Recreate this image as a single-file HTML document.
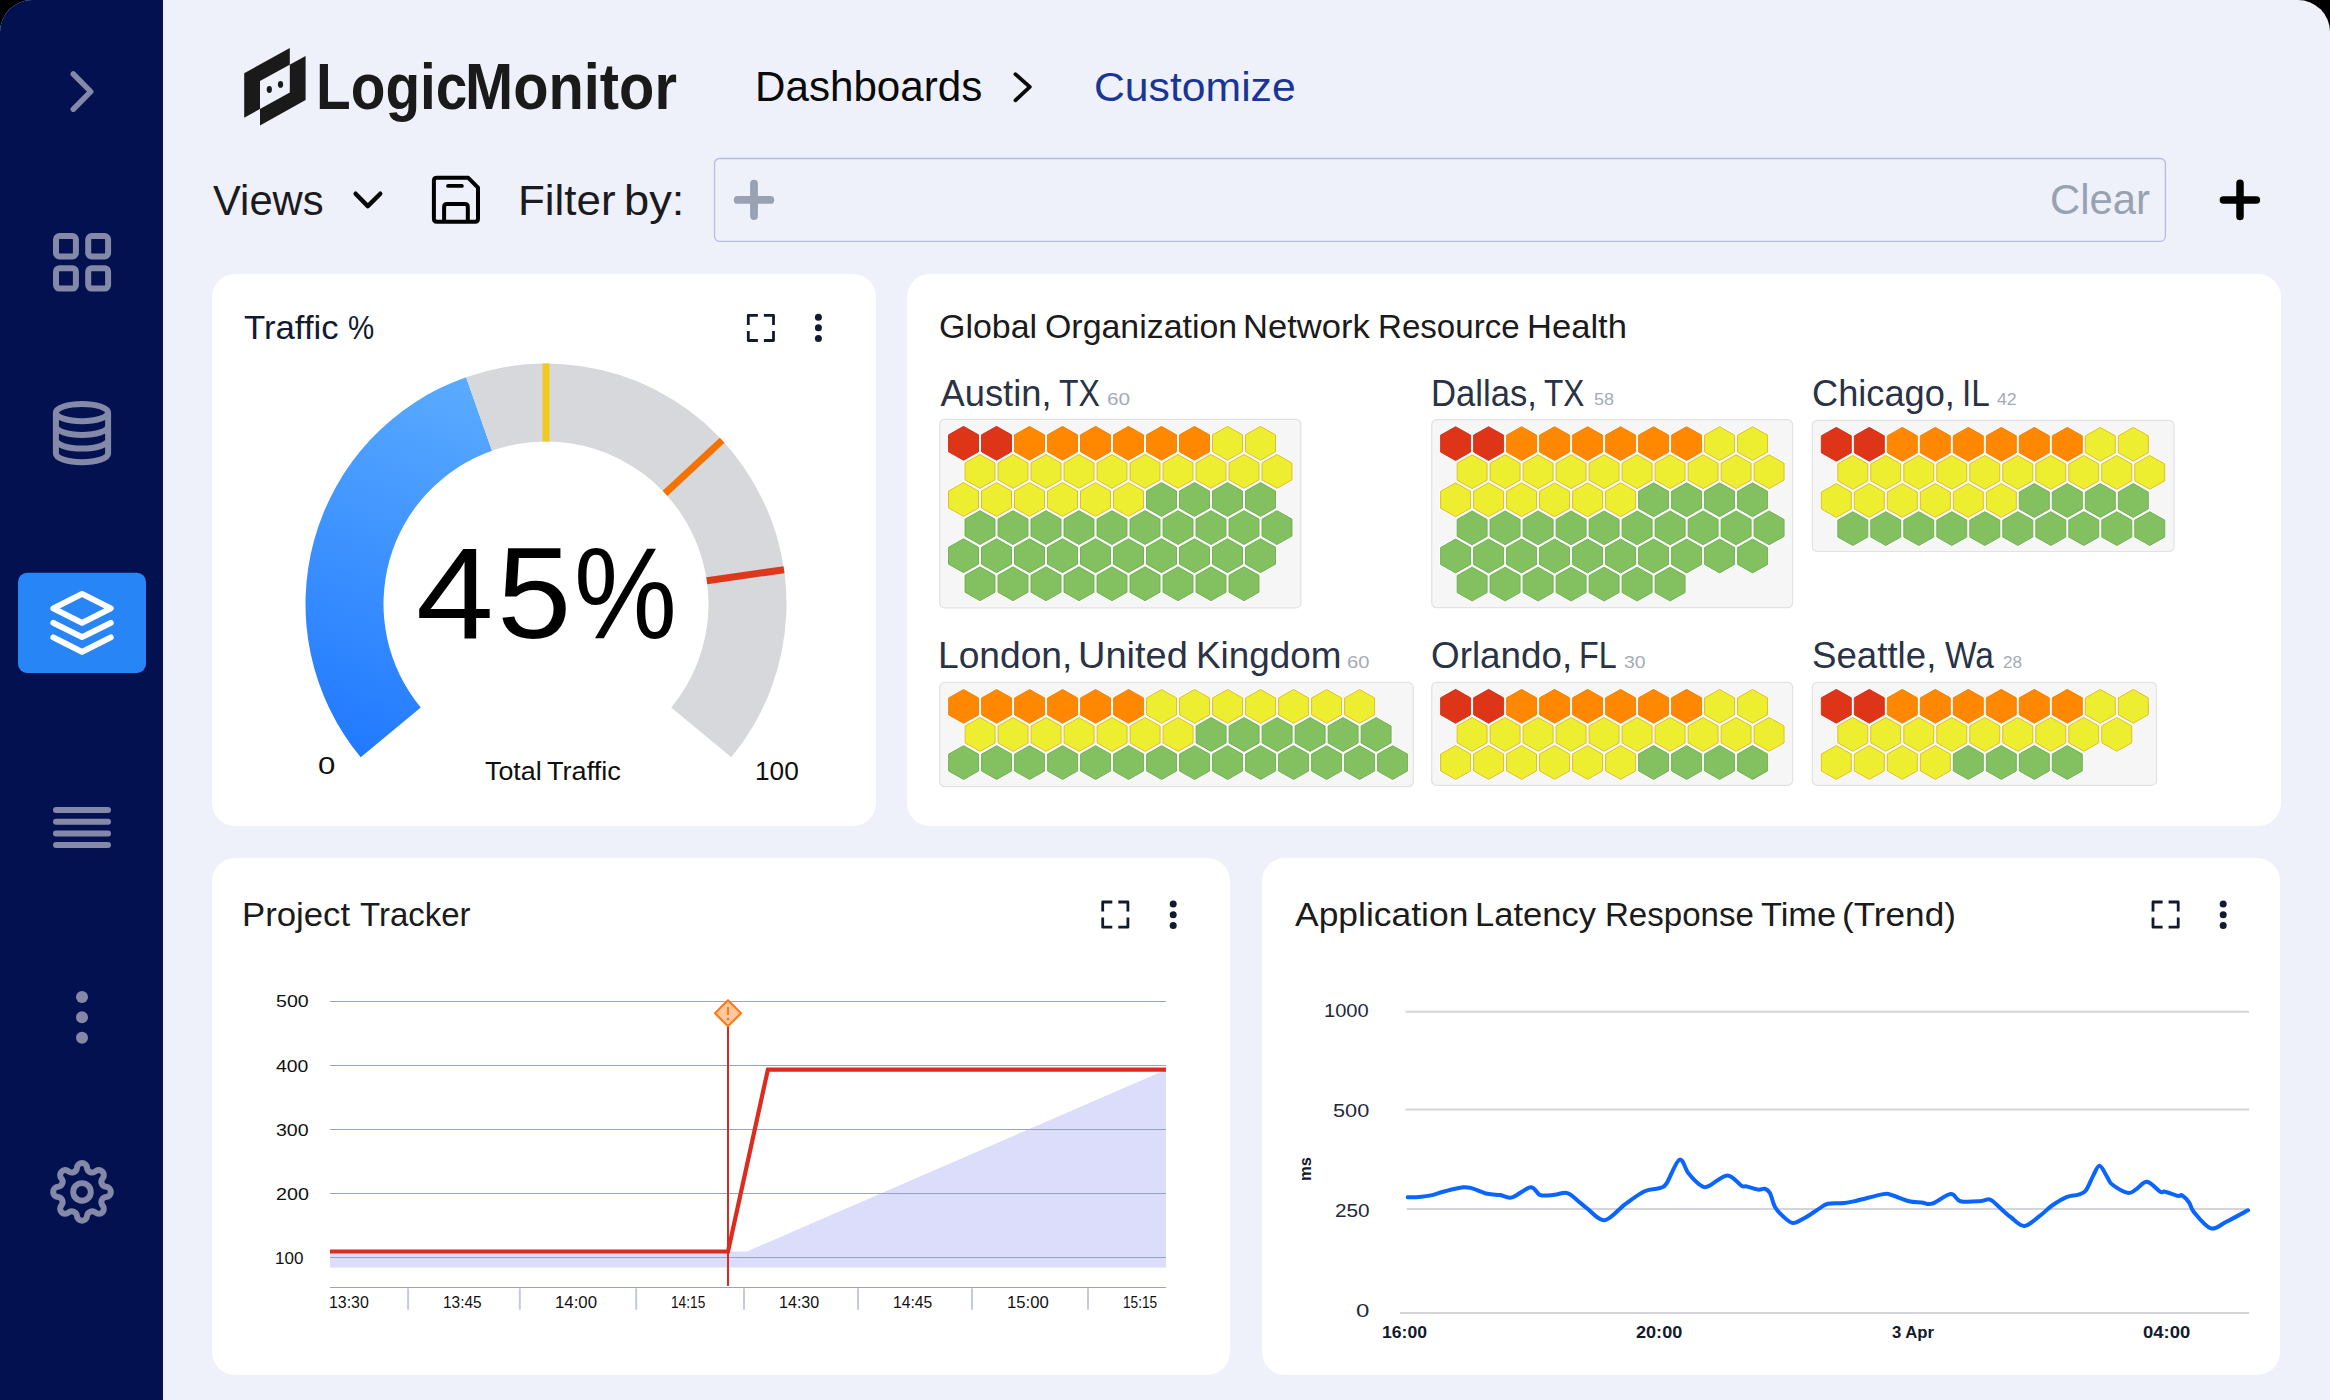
<!DOCTYPE html>
<html><head><meta charset="utf-8"><title>LogicMonitor Dashboard</title><style>
html,body{margin:0;padding:0;width:2330px;height:1400px;overflow:hidden;background:#000;}
#app{position:absolute;left:0;top:0;width:2330px;height:1400px;background:#eef1f9;border-radius:32px 32px 0 0;overflow:hidden;}
#side{position:absolute;left:0;top:0;width:163px;height:1400px;background:#041150;}
.card{position:absolute;background:#fff;border-radius:23px;}
.t{position:absolute;white-space:nowrap;font-family:"Liberation Sans",sans-serif;transform-origin:0 0;}
svg{position:absolute;left:0;top:0;}
</style></head><body>
<div id="app">
<div id="side"></div>
<div class="card" style="left:212px;top:274px;width:664px;height:552px"></div>
<div class="card" style="left:907px;top:274px;width:1374px;height:552px"></div>
<div class="card" style="left:212px;top:858px;width:1018px;height:517px"></div>
<div class="card" style="left:1262px;top:858px;width:1018px;height:517px"></div>
<svg width="2330" height="1400" viewBox="0 0 2330 1400">
<path fill-rule="evenodd" fill="#1a1a1a" d="M244.2,73.2 L289.8,48.1 L289.8,92.6 L244.2,117.7 Z M260,81 L305.6,56.1 L305.6,100 L260,125.5 Z"/>
<ellipse cx="269.3" cy="89.5" rx="2.6" ry="3.4" fill="#1a1a1a"/><ellipse cx="280.5" cy="84.4" rx="2.6" ry="3.4" fill="#1a1a1a"/>
<polyline points="73.3,74 90.7,91.6 73.3,109.2" fill="none" stroke="#8489a8" stroke-width="5.5" stroke-linecap="round" stroke-linejoin="round"/>
<rect x="56" y="236" width="19.9" height="20.4" rx="3.5" fill="none" stroke="#8489a8" stroke-width="6"/>
<rect x="56" y="268.2" width="19.9" height="20.4" rx="3.5" fill="none" stroke="#8489a8" stroke-width="6"/>
<rect x="88.2" y="236" width="19.9" height="20.4" rx="3.5" fill="none" stroke="#8489a8" stroke-width="6"/>
<rect x="88.2" y="268.2" width="19.9" height="20.4" rx="3.5" fill="none" stroke="#8489a8" stroke-width="6"/>
<ellipse cx="82" cy="412.6" rx="26.1" ry="8.65" fill="none" stroke="#8489a8" stroke-width="6"/>
<path d="M55.9,412.6 L55.9,453.58000000000004 A26.1,8.65 0 0 0 108.1,453.58000000000004 L108.1,412.6 M55.9,426.26000000000005 A26.1,8.65 0 0 0 108.1,426.26000000000005 M55.9,439.92 A26.1,8.65 0 0 0 108.1,439.92" fill="none" stroke="#8489a8" stroke-width="6"/>
<rect x="18" y="572.8" width="128" height="100.2" rx="9" fill="#2885f5"/>
<path d="M53.3,608.3 L82.05,593.8 L110.8,608.3 L82.05,622.8 Z" fill="none" stroke="#fff" stroke-width="5.8" stroke-linejoin="round"/>
<polyline points="53.3,622.9 82.05,637.2 110.8,622.9" fill="none" stroke="#fff" stroke-width="5.8" stroke-linecap="round" stroke-linejoin="round"/>
<polyline points="53.3,637.3 82.05,651.8 110.8,637.3" fill="none" stroke="#fff" stroke-width="5.8" stroke-linecap="round" stroke-linejoin="round"/>
<line x1="56" y1="810" x2="108" y2="810" stroke="#8489a8" stroke-width="6" stroke-linecap="round"/>
<line x1="56" y1="821.7" x2="108" y2="821.7" stroke="#8489a8" stroke-width="6" stroke-linecap="round"/>
<line x1="56" y1="833.4" x2="108" y2="833.4" stroke="#8489a8" stroke-width="6" stroke-linecap="round"/>
<line x1="56" y1="845" x2="108" y2="845" stroke="#8489a8" stroke-width="6" stroke-linecap="round"/>
<circle cx="82" cy="997" r="6" fill="#8489a8"/>
<circle cx="82" cy="1017.3" r="6" fill="#8489a8"/>
<circle cx="82" cy="1037.7" r="6" fill="#8489a8"/>
<path d="M76.964,1167.736 A5.05,5.05 0 0 1 87.036,1167.736 A5.12,5.12 0 0 0 95.526,1171.253 A5.05,5.05 0 0 1 102.647,1178.374 A5.12,5.12 0 0 0 106.164,1186.864 A5.05,5.05 0 0 1 106.164,1196.936 A5.12,5.12 0 0 0 102.647,1205.426 A5.05,5.05 0 0 1 95.526,1212.547 A5.12,5.12 0 0 0 87.036,1216.064 A5.05,5.05 0 0 1 76.964,1216.064 A5.12,5.12 0 0 0 68.474,1212.547 A5.05,5.05 0 0 1 61.353,1205.426 A5.12,5.12 0 0 0 57.836,1196.936 A5.05,5.05 0 0 1 57.836,1186.864 A5.12,5.12 0 0 0 61.353,1178.374 A5.05,5.05 0 0 1 68.474,1171.253 A5.12,5.12 0 0 0 76.964,1167.736 Z" fill="none" stroke="#8489a8" stroke-width="6" stroke-linejoin="round"/>
<circle cx="82" cy="1191.9" r="8.8" fill="none" stroke="#8489a8" stroke-width="5.9"/>
<polyline points="1015.4,74.2 1029.8,86.9 1015.4,100.3" fill="none" stroke="#0a0a0a" stroke-width="3.8" stroke-linecap="round" stroke-linejoin="round"/>
<polyline points="355.6,193.7 367.8,206.1 380.3,193.7" fill="none" stroke="#0a0a0a" stroke-width="4.4" stroke-linecap="round" stroke-linejoin="round"/>
<path d="M437,177.8 L468.3,177.8 L478,187.6 L478,218.8 Q478,221.8 475,221.8 L437,221.8 Q433.9,221.8 433.9,218.8 L433.9,180.8 Q433.9,177.8 437,177.8 Z" fill="none" stroke="#000" stroke-width="4" stroke-linejoin="round"/>
<line x1="448.1" y1="185.9" x2="461.8" y2="185.9" stroke="#000" stroke-width="3.9" stroke-linecap="round"/>
<path d="M444.1,221.8 L444.1,207.1 Q444.1,204.1 447.1,204.1 L464.8,204.1 Q467.8,204.1 467.8,207.1 L467.8,221.8" fill="none" stroke="#000" stroke-width="4"/>
<rect x="714.5" y="158.5" width="1450.9" height="82.8" rx="5" fill="none" stroke="#b7bde0" stroke-width="1.3"/>
<path d="M754,183.6 L754,216.1 M737.7,199.9 L770.3,199.9" stroke="#98a2b3" stroke-width="7.8" stroke-linecap="round"/>
<path d="M2240,183.3 L2240,216.6 M2223.4,200 L2256.4,200" stroke="#000" stroke-width="7.5" stroke-linecap="round"/>
<path d="M748.3,324.9 L748.3,315.29999999999995 L757.9,315.29999999999995 M763.9,315.29999999999995 L773.5,315.29999999999995 L773.5,324.9 M773.5,330.9 L773.5,340.5 L763.9,340.5 M757.9,340.5 L748.3,340.5 L748.3,330.9" fill="none" stroke="#111a2e" stroke-width="2.8" stroke-linejoin="round"/>
<circle cx="818.4" cy="317.20" r="3.5" fill="#111a2e"/>
<circle cx="818.4" cy="327.85" r="3.5" fill="#111a2e"/>
<circle cx="818.4" cy="338.50" r="3.5" fill="#111a2e"/>
<path d="M1102.7,911.6 L1102.7,902.0 L1112.3,902.0 M1118.3,902.0 L1127.8999999999999,902.0 L1127.8999999999999,911.6 M1127.8999999999999,917.6 L1127.8999999999999,927.2 L1118.3,927.2 M1112.3,927.2 L1102.7,927.2 L1102.7,917.6" fill="none" stroke="#111a2e" stroke-width="2.8" stroke-linejoin="round"/>
<circle cx="1173.2" cy="904.10" r="3.5" fill="#111a2e"/>
<circle cx="1173.2" cy="914.75" r="3.5" fill="#111a2e"/>
<circle cx="1173.2" cy="925.40" r="3.5" fill="#111a2e"/>
<path d="M2153.0,911.6 L2153.0,902.0 L2162.6,902.0 M2168.6,902.0 L2178.2,902.0 L2178.2,911.6 M2178.2,917.6 L2178.2,927.2 L2168.6,927.2 M2162.6,927.2 L2153.0,927.2 L2153.0,917.6" fill="none" stroke="#111a2e" stroke-width="2.8" stroke-linejoin="round"/>
<circle cx="2223.2" cy="904.10" r="3.5" fill="#111a2e"/>
<circle cx="2223.2" cy="914.75" r="3.5" fill="#111a2e"/>
<circle cx="2223.2" cy="925.40" r="3.5" fill="#111a2e"/>
<defs><linearGradient id="bg" x1="490" y1="370" x2="340" y2="760" gradientUnits="userSpaceOnUse"><stop offset="0" stop-color="#5dadff"/><stop offset="1" stop-color="#1f78ff"/></linearGradient></defs>
<path d="M360.69,757.30 A240.5,240.5 0 0 1 466.12,377.15 L492.02,450.73 A162.5,162.5 0 0 0 420.79,707.58 Z" fill="url(#bg)"/>
<path d="M466.12,377.15 A240.5,240.5 0 0 1 731.31,757.30 L671.21,707.58 A162.5,162.5 0 0 0 492.02,450.73 Z" fill="#d7d8dc"/>
<line x1="546.00" y1="441.50" x2="546.00" y2="363.50" stroke="#f2c81f" stroke-width="7"/>
<line x1="665.04" y1="493.38" x2="722.18" y2="440.29" stroke="#f47200" stroke-width="7"/>
<line x1="706.84" y1="580.82" x2="784.04" y2="569.70" stroke="#de381c" stroke-width="7"/>
<rect x="939.6" y="419.3" width="361.3" height="188.5" rx="5" fill="#f6f6f6" stroke="#e2e2e2" stroke-width="1.2"/>
<polygon points="963.50,425.00 979.70,434.15 979.70,452.45 963.50,461.60 947.30,452.45 947.30,434.15" fill="#ffffff"/>
<polygon points="996.50,425.00 1012.70,434.15 1012.70,452.45 996.50,461.60 980.30,452.45 980.30,434.15" fill="#ffffff"/>
<polygon points="1029.50,425.00 1045.70,434.15 1045.70,452.45 1029.50,461.60 1013.30,452.45 1013.30,434.15" fill="#ffffff"/>
<polygon points="1062.50,425.00 1078.70,434.15 1078.70,452.45 1062.50,461.60 1046.30,452.45 1046.30,434.15" fill="#ffffff"/>
<polygon points="1095.50,425.00 1111.70,434.15 1111.70,452.45 1095.50,461.60 1079.30,452.45 1079.30,434.15" fill="#ffffff"/>
<polygon points="1128.50,425.00 1144.70,434.15 1144.70,452.45 1128.50,461.60 1112.30,452.45 1112.30,434.15" fill="#ffffff"/>
<polygon points="1161.50,425.00 1177.70,434.15 1177.70,452.45 1161.50,461.60 1145.30,452.45 1145.30,434.15" fill="#ffffff"/>
<polygon points="1194.50,425.00 1210.70,434.15 1210.70,452.45 1194.50,461.60 1178.30,452.45 1178.30,434.15" fill="#ffffff"/>
<polygon points="1227.50,425.00 1243.70,434.15 1243.70,452.45 1227.50,461.60 1211.30,452.45 1211.30,434.15" fill="#ffffff"/>
<polygon points="1260.50,425.00 1276.70,434.15 1276.70,452.45 1260.50,461.60 1244.30,452.45 1244.30,434.15" fill="#ffffff"/>
<polygon points="980.00,453.10 996.20,462.25 996.20,480.55 980.00,489.70 963.80,480.55 963.80,462.25" fill="#ffffff"/>
<polygon points="1013.00,453.10 1029.20,462.25 1029.20,480.55 1013.00,489.70 996.80,480.55 996.80,462.25" fill="#ffffff"/>
<polygon points="1046.00,453.10 1062.20,462.25 1062.20,480.55 1046.00,489.70 1029.80,480.55 1029.80,462.25" fill="#ffffff"/>
<polygon points="1079.00,453.10 1095.20,462.25 1095.20,480.55 1079.00,489.70 1062.80,480.55 1062.80,462.25" fill="#ffffff"/>
<polygon points="1112.00,453.10 1128.20,462.25 1128.20,480.55 1112.00,489.70 1095.80,480.55 1095.80,462.25" fill="#ffffff"/>
<polygon points="1145.00,453.10 1161.20,462.25 1161.20,480.55 1145.00,489.70 1128.80,480.55 1128.80,462.25" fill="#ffffff"/>
<polygon points="1178.00,453.10 1194.20,462.25 1194.20,480.55 1178.00,489.70 1161.80,480.55 1161.80,462.25" fill="#ffffff"/>
<polygon points="1211.00,453.10 1227.20,462.25 1227.20,480.55 1211.00,489.70 1194.80,480.55 1194.80,462.25" fill="#ffffff"/>
<polygon points="1244.00,453.10 1260.20,462.25 1260.20,480.55 1244.00,489.70 1227.80,480.55 1227.80,462.25" fill="#ffffff"/>
<polygon points="1277.00,453.10 1293.20,462.25 1293.20,480.55 1277.00,489.70 1260.80,480.55 1260.80,462.25" fill="#ffffff"/>
<polygon points="963.50,481.20 979.70,490.35 979.70,508.65 963.50,517.80 947.30,508.65 947.30,490.35" fill="#ffffff"/>
<polygon points="996.50,481.20 1012.70,490.35 1012.70,508.65 996.50,517.80 980.30,508.65 980.30,490.35" fill="#ffffff"/>
<polygon points="1029.50,481.20 1045.70,490.35 1045.70,508.65 1029.50,517.80 1013.30,508.65 1013.30,490.35" fill="#ffffff"/>
<polygon points="1062.50,481.20 1078.70,490.35 1078.70,508.65 1062.50,517.80 1046.30,508.65 1046.30,490.35" fill="#ffffff"/>
<polygon points="1095.50,481.20 1111.70,490.35 1111.70,508.65 1095.50,517.80 1079.30,508.65 1079.30,490.35" fill="#ffffff"/>
<polygon points="1128.50,481.20 1144.70,490.35 1144.70,508.65 1128.50,517.80 1112.30,508.65 1112.30,490.35" fill="#ffffff"/>
<polygon points="1161.50,481.20 1177.70,490.35 1177.70,508.65 1161.50,517.80 1145.30,508.65 1145.30,490.35" fill="#ffffff"/>
<polygon points="1194.50,481.20 1210.70,490.35 1210.70,508.65 1194.50,517.80 1178.30,508.65 1178.30,490.35" fill="#ffffff"/>
<polygon points="1227.50,481.20 1243.70,490.35 1243.70,508.65 1227.50,517.80 1211.30,508.65 1211.30,490.35" fill="#ffffff"/>
<polygon points="1260.50,481.20 1276.70,490.35 1276.70,508.65 1260.50,517.80 1244.30,508.65 1244.30,490.35" fill="#ffffff"/>
<polygon points="980.00,509.30 996.20,518.45 996.20,536.75 980.00,545.90 963.80,536.75 963.80,518.45" fill="#ffffff"/>
<polygon points="1013.00,509.30 1029.20,518.45 1029.20,536.75 1013.00,545.90 996.80,536.75 996.80,518.45" fill="#ffffff"/>
<polygon points="1046.00,509.30 1062.20,518.45 1062.20,536.75 1046.00,545.90 1029.80,536.75 1029.80,518.45" fill="#ffffff"/>
<polygon points="1079.00,509.30 1095.20,518.45 1095.20,536.75 1079.00,545.90 1062.80,536.75 1062.80,518.45" fill="#ffffff"/>
<polygon points="1112.00,509.30 1128.20,518.45 1128.20,536.75 1112.00,545.90 1095.80,536.75 1095.80,518.45" fill="#ffffff"/>
<polygon points="1145.00,509.30 1161.20,518.45 1161.20,536.75 1145.00,545.90 1128.80,536.75 1128.80,518.45" fill="#ffffff"/>
<polygon points="1178.00,509.30 1194.20,518.45 1194.20,536.75 1178.00,545.90 1161.80,536.75 1161.80,518.45" fill="#ffffff"/>
<polygon points="1211.00,509.30 1227.20,518.45 1227.20,536.75 1211.00,545.90 1194.80,536.75 1194.80,518.45" fill="#ffffff"/>
<polygon points="1244.00,509.30 1260.20,518.45 1260.20,536.75 1244.00,545.90 1227.80,536.75 1227.80,518.45" fill="#ffffff"/>
<polygon points="1277.00,509.30 1293.20,518.45 1293.20,536.75 1277.00,545.90 1260.80,536.75 1260.80,518.45" fill="#ffffff"/>
<polygon points="963.50,537.40 979.70,546.55 979.70,564.85 963.50,574.00 947.30,564.85 947.30,546.55" fill="#ffffff"/>
<polygon points="996.50,537.40 1012.70,546.55 1012.70,564.85 996.50,574.00 980.30,564.85 980.30,546.55" fill="#ffffff"/>
<polygon points="1029.50,537.40 1045.70,546.55 1045.70,564.85 1029.50,574.00 1013.30,564.85 1013.30,546.55" fill="#ffffff"/>
<polygon points="1062.50,537.40 1078.70,546.55 1078.70,564.85 1062.50,574.00 1046.30,564.85 1046.30,546.55" fill="#ffffff"/>
<polygon points="1095.50,537.40 1111.70,546.55 1111.70,564.85 1095.50,574.00 1079.30,564.85 1079.30,546.55" fill="#ffffff"/>
<polygon points="1128.50,537.40 1144.70,546.55 1144.70,564.85 1128.50,574.00 1112.30,564.85 1112.30,546.55" fill="#ffffff"/>
<polygon points="1161.50,537.40 1177.70,546.55 1177.70,564.85 1161.50,574.00 1145.30,564.85 1145.30,546.55" fill="#ffffff"/>
<polygon points="1194.50,537.40 1210.70,546.55 1210.70,564.85 1194.50,574.00 1178.30,564.85 1178.30,546.55" fill="#ffffff"/>
<polygon points="1227.50,537.40 1243.70,546.55 1243.70,564.85 1227.50,574.00 1211.30,564.85 1211.30,546.55" fill="#ffffff"/>
<polygon points="1260.50,537.40 1276.70,546.55 1276.70,564.85 1260.50,574.00 1244.30,564.85 1244.30,546.55" fill="#ffffff"/>
<polygon points="980.00,565.50 996.20,574.65 996.20,592.95 980.00,602.10 963.80,592.95 963.80,574.65" fill="#ffffff"/>
<polygon points="1013.00,565.50 1029.20,574.65 1029.20,592.95 1013.00,602.10 996.80,592.95 996.80,574.65" fill="#ffffff"/>
<polygon points="1046.00,565.50 1062.20,574.65 1062.20,592.95 1046.00,602.10 1029.80,592.95 1029.80,574.65" fill="#ffffff"/>
<polygon points="1079.00,565.50 1095.20,574.65 1095.20,592.95 1079.00,602.10 1062.80,592.95 1062.80,574.65" fill="#ffffff"/>
<polygon points="1112.00,565.50 1128.20,574.65 1128.20,592.95 1112.00,602.10 1095.80,592.95 1095.80,574.65" fill="#ffffff"/>
<polygon points="1145.00,565.50 1161.20,574.65 1161.20,592.95 1145.00,602.10 1128.80,592.95 1128.80,574.65" fill="#ffffff"/>
<polygon points="1178.00,565.50 1194.20,574.65 1194.20,592.95 1178.00,602.10 1161.80,592.95 1161.80,574.65" fill="#ffffff"/>
<polygon points="1211.00,565.50 1227.20,574.65 1227.20,592.95 1211.00,602.10 1194.80,592.95 1194.80,574.65" fill="#ffffff"/>
<polygon points="1244.00,565.50 1260.20,574.65 1260.20,592.95 1244.00,602.10 1227.80,592.95 1227.80,574.65" fill="#ffffff"/>
<polygon points="963.50,426.35 978.50,434.82 978.50,451.78 963.50,460.25 948.50,451.78 948.50,434.82" fill="#de3519" stroke="#c8301a" stroke-width="0.9"/>
<polygon points="996.50,426.35 1011.50,434.82 1011.50,451.78 996.50,460.25 981.50,451.78 981.50,434.82" fill="#de3519" stroke="#c8301a" stroke-width="0.9"/>
<polygon points="1029.50,426.35 1044.50,434.82 1044.50,451.78 1029.50,460.25 1014.50,451.78 1014.50,434.82" fill="#ff8800" stroke="#ee7f00" stroke-width="0.9"/>
<polygon points="1062.50,426.35 1077.50,434.82 1077.50,451.78 1062.50,460.25 1047.50,451.78 1047.50,434.82" fill="#ff8800" stroke="#ee7f00" stroke-width="0.9"/>
<polygon points="1095.50,426.35 1110.50,434.82 1110.50,451.78 1095.50,460.25 1080.50,451.78 1080.50,434.82" fill="#ff8800" stroke="#ee7f00" stroke-width="0.9"/>
<polygon points="1128.50,426.35 1143.50,434.82 1143.50,451.78 1128.50,460.25 1113.50,451.78 1113.50,434.82" fill="#ff8800" stroke="#ee7f00" stroke-width="0.9"/>
<polygon points="1161.50,426.35 1176.50,434.82 1176.50,451.78 1161.50,460.25 1146.50,451.78 1146.50,434.82" fill="#ff8800" stroke="#ee7f00" stroke-width="0.9"/>
<polygon points="1194.50,426.35 1209.50,434.82 1209.50,451.78 1194.50,460.25 1179.50,451.78 1179.50,434.82" fill="#ff8800" stroke="#ee7f00" stroke-width="0.9"/>
<polygon points="1227.50,426.35 1242.50,434.82 1242.50,451.78 1227.50,460.25 1212.50,451.78 1212.50,434.82" fill="#eeee30" stroke="#dcb523" stroke-width="0.9"/>
<polygon points="1260.50,426.35 1275.50,434.82 1275.50,451.78 1260.50,460.25 1245.50,451.78 1245.50,434.82" fill="#eeee30" stroke="#dcb523" stroke-width="0.9"/>
<polygon points="980.00,454.45 995.00,462.93 995.00,479.88 980.00,488.35 965.00,479.88 965.00,462.93" fill="#eeee30" stroke="#dcb523" stroke-width="0.9"/>
<polygon points="1013.00,454.45 1028.00,462.93 1028.00,479.88 1013.00,488.35 998.00,479.88 998.00,462.93" fill="#eeee30" stroke="#dcb523" stroke-width="0.9"/>
<polygon points="1046.00,454.45 1061.00,462.93 1061.00,479.88 1046.00,488.35 1031.00,479.88 1031.00,462.93" fill="#eeee30" stroke="#dcb523" stroke-width="0.9"/>
<polygon points="1079.00,454.45 1094.00,462.93 1094.00,479.88 1079.00,488.35 1064.00,479.88 1064.00,462.93" fill="#eeee30" stroke="#dcb523" stroke-width="0.9"/>
<polygon points="1112.00,454.45 1127.00,462.93 1127.00,479.88 1112.00,488.35 1097.00,479.88 1097.00,462.93" fill="#eeee30" stroke="#dcb523" stroke-width="0.9"/>
<polygon points="1145.00,454.45 1160.00,462.93 1160.00,479.88 1145.00,488.35 1130.00,479.88 1130.00,462.93" fill="#eeee30" stroke="#dcb523" stroke-width="0.9"/>
<polygon points="1178.00,454.45 1193.00,462.93 1193.00,479.88 1178.00,488.35 1163.00,479.88 1163.00,462.93" fill="#eeee30" stroke="#dcb523" stroke-width="0.9"/>
<polygon points="1211.00,454.45 1226.00,462.93 1226.00,479.88 1211.00,488.35 1196.00,479.88 1196.00,462.93" fill="#eeee30" stroke="#dcb523" stroke-width="0.9"/>
<polygon points="1244.00,454.45 1259.00,462.93 1259.00,479.88 1244.00,488.35 1229.00,479.88 1229.00,462.93" fill="#eeee30" stroke="#dcb523" stroke-width="0.9"/>
<polygon points="1277.00,454.45 1292.00,462.93 1292.00,479.88 1277.00,488.35 1262.00,479.88 1262.00,462.93" fill="#eeee30" stroke="#dcb523" stroke-width="0.9"/>
<polygon points="963.50,482.55 978.50,491.02 978.50,507.98 963.50,516.45 948.50,507.98 948.50,491.02" fill="#eeee30" stroke="#dcb523" stroke-width="0.9"/>
<polygon points="996.50,482.55 1011.50,491.02 1011.50,507.98 996.50,516.45 981.50,507.98 981.50,491.02" fill="#eeee30" stroke="#dcb523" stroke-width="0.9"/>
<polygon points="1029.50,482.55 1044.50,491.02 1044.50,507.98 1029.50,516.45 1014.50,507.98 1014.50,491.02" fill="#eeee30" stroke="#dcb523" stroke-width="0.9"/>
<polygon points="1062.50,482.55 1077.50,491.02 1077.50,507.98 1062.50,516.45 1047.50,507.98 1047.50,491.02" fill="#eeee30" stroke="#dcb523" stroke-width="0.9"/>
<polygon points="1095.50,482.55 1110.50,491.02 1110.50,507.98 1095.50,516.45 1080.50,507.98 1080.50,491.02" fill="#eeee30" stroke="#dcb523" stroke-width="0.9"/>
<polygon points="1128.50,482.55 1143.50,491.02 1143.50,507.98 1128.50,516.45 1113.50,507.98 1113.50,491.02" fill="#eeee30" stroke="#dcb523" stroke-width="0.9"/>
<polygon points="1161.50,482.55 1176.50,491.02 1176.50,507.98 1161.50,516.45 1146.50,507.98 1146.50,491.02" fill="#82c060" stroke="#70aa52" stroke-width="0.9"/>
<polygon points="1194.50,482.55 1209.50,491.02 1209.50,507.98 1194.50,516.45 1179.50,507.98 1179.50,491.02" fill="#82c060" stroke="#70aa52" stroke-width="0.9"/>
<polygon points="1227.50,482.55 1242.50,491.02 1242.50,507.98 1227.50,516.45 1212.50,507.98 1212.50,491.02" fill="#82c060" stroke="#70aa52" stroke-width="0.9"/>
<polygon points="1260.50,482.55 1275.50,491.02 1275.50,507.98 1260.50,516.45 1245.50,507.98 1245.50,491.02" fill="#82c060" stroke="#70aa52" stroke-width="0.9"/>
<polygon points="980.00,510.65 995.00,519.12 995.00,536.08 980.00,544.55 965.00,536.08 965.00,519.12" fill="#82c060" stroke="#70aa52" stroke-width="0.9"/>
<polygon points="1013.00,510.65 1028.00,519.12 1028.00,536.08 1013.00,544.55 998.00,536.08 998.00,519.12" fill="#82c060" stroke="#70aa52" stroke-width="0.9"/>
<polygon points="1046.00,510.65 1061.00,519.12 1061.00,536.08 1046.00,544.55 1031.00,536.08 1031.00,519.12" fill="#82c060" stroke="#70aa52" stroke-width="0.9"/>
<polygon points="1079.00,510.65 1094.00,519.12 1094.00,536.08 1079.00,544.55 1064.00,536.08 1064.00,519.12" fill="#82c060" stroke="#70aa52" stroke-width="0.9"/>
<polygon points="1112.00,510.65 1127.00,519.12 1127.00,536.08 1112.00,544.55 1097.00,536.08 1097.00,519.12" fill="#82c060" stroke="#70aa52" stroke-width="0.9"/>
<polygon points="1145.00,510.65 1160.00,519.12 1160.00,536.08 1145.00,544.55 1130.00,536.08 1130.00,519.12" fill="#82c060" stroke="#70aa52" stroke-width="0.9"/>
<polygon points="1178.00,510.65 1193.00,519.12 1193.00,536.08 1178.00,544.55 1163.00,536.08 1163.00,519.12" fill="#82c060" stroke="#70aa52" stroke-width="0.9"/>
<polygon points="1211.00,510.65 1226.00,519.12 1226.00,536.08 1211.00,544.55 1196.00,536.08 1196.00,519.12" fill="#82c060" stroke="#70aa52" stroke-width="0.9"/>
<polygon points="1244.00,510.65 1259.00,519.12 1259.00,536.08 1244.00,544.55 1229.00,536.08 1229.00,519.12" fill="#82c060" stroke="#70aa52" stroke-width="0.9"/>
<polygon points="1277.00,510.65 1292.00,519.12 1292.00,536.08 1277.00,544.55 1262.00,536.08 1262.00,519.12" fill="#82c060" stroke="#70aa52" stroke-width="0.9"/>
<polygon points="963.50,538.75 978.50,547.23 978.50,564.18 963.50,572.65 948.50,564.18 948.50,547.23" fill="#82c060" stroke="#70aa52" stroke-width="0.9"/>
<polygon points="996.50,538.75 1011.50,547.23 1011.50,564.18 996.50,572.65 981.50,564.18 981.50,547.23" fill="#82c060" stroke="#70aa52" stroke-width="0.9"/>
<polygon points="1029.50,538.75 1044.50,547.23 1044.50,564.18 1029.50,572.65 1014.50,564.18 1014.50,547.23" fill="#82c060" stroke="#70aa52" stroke-width="0.9"/>
<polygon points="1062.50,538.75 1077.50,547.23 1077.50,564.18 1062.50,572.65 1047.50,564.18 1047.50,547.23" fill="#82c060" stroke="#70aa52" stroke-width="0.9"/>
<polygon points="1095.50,538.75 1110.50,547.23 1110.50,564.18 1095.50,572.65 1080.50,564.18 1080.50,547.23" fill="#82c060" stroke="#70aa52" stroke-width="0.9"/>
<polygon points="1128.50,538.75 1143.50,547.23 1143.50,564.18 1128.50,572.65 1113.50,564.18 1113.50,547.23" fill="#82c060" stroke="#70aa52" stroke-width="0.9"/>
<polygon points="1161.50,538.75 1176.50,547.23 1176.50,564.18 1161.50,572.65 1146.50,564.18 1146.50,547.23" fill="#82c060" stroke="#70aa52" stroke-width="0.9"/>
<polygon points="1194.50,538.75 1209.50,547.23 1209.50,564.18 1194.50,572.65 1179.50,564.18 1179.50,547.23" fill="#82c060" stroke="#70aa52" stroke-width="0.9"/>
<polygon points="1227.50,538.75 1242.50,547.23 1242.50,564.18 1227.50,572.65 1212.50,564.18 1212.50,547.23" fill="#82c060" stroke="#70aa52" stroke-width="0.9"/>
<polygon points="1260.50,538.75 1275.50,547.23 1275.50,564.18 1260.50,572.65 1245.50,564.18 1245.50,547.23" fill="#82c060" stroke="#70aa52" stroke-width="0.9"/>
<polygon points="980.00,566.85 995.00,575.32 995.00,592.27 980.00,600.75 965.00,592.27 965.00,575.32" fill="#82c060" stroke="#70aa52" stroke-width="0.9"/>
<polygon points="1013.00,566.85 1028.00,575.32 1028.00,592.27 1013.00,600.75 998.00,592.27 998.00,575.32" fill="#82c060" stroke="#70aa52" stroke-width="0.9"/>
<polygon points="1046.00,566.85 1061.00,575.32 1061.00,592.27 1046.00,600.75 1031.00,592.27 1031.00,575.32" fill="#82c060" stroke="#70aa52" stroke-width="0.9"/>
<polygon points="1079.00,566.85 1094.00,575.32 1094.00,592.27 1079.00,600.75 1064.00,592.27 1064.00,575.32" fill="#82c060" stroke="#70aa52" stroke-width="0.9"/>
<polygon points="1112.00,566.85 1127.00,575.32 1127.00,592.27 1112.00,600.75 1097.00,592.27 1097.00,575.32" fill="#82c060" stroke="#70aa52" stroke-width="0.9"/>
<polygon points="1145.00,566.85 1160.00,575.32 1160.00,592.27 1145.00,600.75 1130.00,592.27 1130.00,575.32" fill="#82c060" stroke="#70aa52" stroke-width="0.9"/>
<polygon points="1178.00,566.85 1193.00,575.32 1193.00,592.27 1178.00,600.75 1163.00,592.27 1163.00,575.32" fill="#82c060" stroke="#70aa52" stroke-width="0.9"/>
<polygon points="1211.00,566.85 1226.00,575.32 1226.00,592.27 1211.00,600.75 1196.00,592.27 1196.00,575.32" fill="#82c060" stroke="#70aa52" stroke-width="0.9"/>
<polygon points="1244.00,566.85 1259.00,575.32 1259.00,592.27 1244.00,600.75 1229.00,592.27 1229.00,575.32" fill="#82c060" stroke="#70aa52" stroke-width="0.9"/>
<rect x="1431.7" y="419.6" width="360.9" height="188.1" rx="5" fill="#f6f6f6" stroke="#e2e2e2" stroke-width="1.2"/>
<polygon points="1455.60,425.30 1471.80,434.45 1471.80,452.75 1455.60,461.90 1439.40,452.75 1439.40,434.45" fill="#ffffff"/>
<polygon points="1488.60,425.30 1504.80,434.45 1504.80,452.75 1488.60,461.90 1472.40,452.75 1472.40,434.45" fill="#ffffff"/>
<polygon points="1521.60,425.30 1537.80,434.45 1537.80,452.75 1521.60,461.90 1505.40,452.75 1505.40,434.45" fill="#ffffff"/>
<polygon points="1554.60,425.30 1570.80,434.45 1570.80,452.75 1554.60,461.90 1538.40,452.75 1538.40,434.45" fill="#ffffff"/>
<polygon points="1587.60,425.30 1603.80,434.45 1603.80,452.75 1587.60,461.90 1571.40,452.75 1571.40,434.45" fill="#ffffff"/>
<polygon points="1620.60,425.30 1636.80,434.45 1636.80,452.75 1620.60,461.90 1604.40,452.75 1604.40,434.45" fill="#ffffff"/>
<polygon points="1653.60,425.30 1669.80,434.45 1669.80,452.75 1653.60,461.90 1637.40,452.75 1637.40,434.45" fill="#ffffff"/>
<polygon points="1686.60,425.30 1702.80,434.45 1702.80,452.75 1686.60,461.90 1670.40,452.75 1670.40,434.45" fill="#ffffff"/>
<polygon points="1719.60,425.30 1735.80,434.45 1735.80,452.75 1719.60,461.90 1703.40,452.75 1703.40,434.45" fill="#ffffff"/>
<polygon points="1752.60,425.30 1768.80,434.45 1768.80,452.75 1752.60,461.90 1736.40,452.75 1736.40,434.45" fill="#ffffff"/>
<polygon points="1472.10,453.40 1488.30,462.55 1488.30,480.85 1472.10,490.00 1455.90,480.85 1455.90,462.55" fill="#ffffff"/>
<polygon points="1505.10,453.40 1521.30,462.55 1521.30,480.85 1505.10,490.00 1488.90,480.85 1488.90,462.55" fill="#ffffff"/>
<polygon points="1538.10,453.40 1554.30,462.55 1554.30,480.85 1538.10,490.00 1521.90,480.85 1521.90,462.55" fill="#ffffff"/>
<polygon points="1571.10,453.40 1587.30,462.55 1587.30,480.85 1571.10,490.00 1554.90,480.85 1554.90,462.55" fill="#ffffff"/>
<polygon points="1604.10,453.40 1620.30,462.55 1620.30,480.85 1604.10,490.00 1587.90,480.85 1587.90,462.55" fill="#ffffff"/>
<polygon points="1637.10,453.40 1653.30,462.55 1653.30,480.85 1637.10,490.00 1620.90,480.85 1620.90,462.55" fill="#ffffff"/>
<polygon points="1670.10,453.40 1686.30,462.55 1686.30,480.85 1670.10,490.00 1653.90,480.85 1653.90,462.55" fill="#ffffff"/>
<polygon points="1703.10,453.40 1719.30,462.55 1719.30,480.85 1703.10,490.00 1686.90,480.85 1686.90,462.55" fill="#ffffff"/>
<polygon points="1736.10,453.40 1752.30,462.55 1752.30,480.85 1736.10,490.00 1719.90,480.85 1719.90,462.55" fill="#ffffff"/>
<polygon points="1769.10,453.40 1785.30,462.55 1785.30,480.85 1769.10,490.00 1752.90,480.85 1752.90,462.55" fill="#ffffff"/>
<polygon points="1455.60,481.50 1471.80,490.65 1471.80,508.95 1455.60,518.10 1439.40,508.95 1439.40,490.65" fill="#ffffff"/>
<polygon points="1488.60,481.50 1504.80,490.65 1504.80,508.95 1488.60,518.10 1472.40,508.95 1472.40,490.65" fill="#ffffff"/>
<polygon points="1521.60,481.50 1537.80,490.65 1537.80,508.95 1521.60,518.10 1505.40,508.95 1505.40,490.65" fill="#ffffff"/>
<polygon points="1554.60,481.50 1570.80,490.65 1570.80,508.95 1554.60,518.10 1538.40,508.95 1538.40,490.65" fill="#ffffff"/>
<polygon points="1587.60,481.50 1603.80,490.65 1603.80,508.95 1587.60,518.10 1571.40,508.95 1571.40,490.65" fill="#ffffff"/>
<polygon points="1620.60,481.50 1636.80,490.65 1636.80,508.95 1620.60,518.10 1604.40,508.95 1604.40,490.65" fill="#ffffff"/>
<polygon points="1653.60,481.50 1669.80,490.65 1669.80,508.95 1653.60,518.10 1637.40,508.95 1637.40,490.65" fill="#ffffff"/>
<polygon points="1686.60,481.50 1702.80,490.65 1702.80,508.95 1686.60,518.10 1670.40,508.95 1670.40,490.65" fill="#ffffff"/>
<polygon points="1719.60,481.50 1735.80,490.65 1735.80,508.95 1719.60,518.10 1703.40,508.95 1703.40,490.65" fill="#ffffff"/>
<polygon points="1752.60,481.50 1768.80,490.65 1768.80,508.95 1752.60,518.10 1736.40,508.95 1736.40,490.65" fill="#ffffff"/>
<polygon points="1472.10,509.60 1488.30,518.75 1488.30,537.05 1472.10,546.20 1455.90,537.05 1455.90,518.75" fill="#ffffff"/>
<polygon points="1505.10,509.60 1521.30,518.75 1521.30,537.05 1505.10,546.20 1488.90,537.05 1488.90,518.75" fill="#ffffff"/>
<polygon points="1538.10,509.60 1554.30,518.75 1554.30,537.05 1538.10,546.20 1521.90,537.05 1521.90,518.75" fill="#ffffff"/>
<polygon points="1571.10,509.60 1587.30,518.75 1587.30,537.05 1571.10,546.20 1554.90,537.05 1554.90,518.75" fill="#ffffff"/>
<polygon points="1604.10,509.60 1620.30,518.75 1620.30,537.05 1604.10,546.20 1587.90,537.05 1587.90,518.75" fill="#ffffff"/>
<polygon points="1637.10,509.60 1653.30,518.75 1653.30,537.05 1637.10,546.20 1620.90,537.05 1620.90,518.75" fill="#ffffff"/>
<polygon points="1670.10,509.60 1686.30,518.75 1686.30,537.05 1670.10,546.20 1653.90,537.05 1653.90,518.75" fill="#ffffff"/>
<polygon points="1703.10,509.60 1719.30,518.75 1719.30,537.05 1703.10,546.20 1686.90,537.05 1686.90,518.75" fill="#ffffff"/>
<polygon points="1736.10,509.60 1752.30,518.75 1752.30,537.05 1736.10,546.20 1719.90,537.05 1719.90,518.75" fill="#ffffff"/>
<polygon points="1769.10,509.60 1785.30,518.75 1785.30,537.05 1769.10,546.20 1752.90,537.05 1752.90,518.75" fill="#ffffff"/>
<polygon points="1455.60,537.70 1471.80,546.85 1471.80,565.15 1455.60,574.30 1439.40,565.15 1439.40,546.85" fill="#ffffff"/>
<polygon points="1488.60,537.70 1504.80,546.85 1504.80,565.15 1488.60,574.30 1472.40,565.15 1472.40,546.85" fill="#ffffff"/>
<polygon points="1521.60,537.70 1537.80,546.85 1537.80,565.15 1521.60,574.30 1505.40,565.15 1505.40,546.85" fill="#ffffff"/>
<polygon points="1554.60,537.70 1570.80,546.85 1570.80,565.15 1554.60,574.30 1538.40,565.15 1538.40,546.85" fill="#ffffff"/>
<polygon points="1587.60,537.70 1603.80,546.85 1603.80,565.15 1587.60,574.30 1571.40,565.15 1571.40,546.85" fill="#ffffff"/>
<polygon points="1620.60,537.70 1636.80,546.85 1636.80,565.15 1620.60,574.30 1604.40,565.15 1604.40,546.85" fill="#ffffff"/>
<polygon points="1653.60,537.70 1669.80,546.85 1669.80,565.15 1653.60,574.30 1637.40,565.15 1637.40,546.85" fill="#ffffff"/>
<polygon points="1686.60,537.70 1702.80,546.85 1702.80,565.15 1686.60,574.30 1670.40,565.15 1670.40,546.85" fill="#ffffff"/>
<polygon points="1719.60,537.70 1735.80,546.85 1735.80,565.15 1719.60,574.30 1703.40,565.15 1703.40,546.85" fill="#ffffff"/>
<polygon points="1752.60,537.70 1768.80,546.85 1768.80,565.15 1752.60,574.30 1736.40,565.15 1736.40,546.85" fill="#ffffff"/>
<polygon points="1472.10,565.80 1488.30,574.95 1488.30,593.25 1472.10,602.40 1455.90,593.25 1455.90,574.95" fill="#ffffff"/>
<polygon points="1505.10,565.80 1521.30,574.95 1521.30,593.25 1505.10,602.40 1488.90,593.25 1488.90,574.95" fill="#ffffff"/>
<polygon points="1538.10,565.80 1554.30,574.95 1554.30,593.25 1538.10,602.40 1521.90,593.25 1521.90,574.95" fill="#ffffff"/>
<polygon points="1571.10,565.80 1587.30,574.95 1587.30,593.25 1571.10,602.40 1554.90,593.25 1554.90,574.95" fill="#ffffff"/>
<polygon points="1604.10,565.80 1620.30,574.95 1620.30,593.25 1604.10,602.40 1587.90,593.25 1587.90,574.95" fill="#ffffff"/>
<polygon points="1637.10,565.80 1653.30,574.95 1653.30,593.25 1637.10,602.40 1620.90,593.25 1620.90,574.95" fill="#ffffff"/>
<polygon points="1670.10,565.80 1686.30,574.95 1686.30,593.25 1670.10,602.40 1653.90,593.25 1653.90,574.95" fill="#ffffff"/>
<polygon points="1455.60,426.65 1470.60,435.12 1470.60,452.08 1455.60,460.55 1440.60,452.08 1440.60,435.12" fill="#de3519" stroke="#c8301a" stroke-width="0.9"/>
<polygon points="1488.60,426.65 1503.60,435.12 1503.60,452.08 1488.60,460.55 1473.60,452.08 1473.60,435.12" fill="#de3519" stroke="#c8301a" stroke-width="0.9"/>
<polygon points="1521.60,426.65 1536.60,435.12 1536.60,452.08 1521.60,460.55 1506.60,452.08 1506.60,435.12" fill="#ff8800" stroke="#ee7f00" stroke-width="0.9"/>
<polygon points="1554.60,426.65 1569.60,435.12 1569.60,452.08 1554.60,460.55 1539.60,452.08 1539.60,435.12" fill="#ff8800" stroke="#ee7f00" stroke-width="0.9"/>
<polygon points="1587.60,426.65 1602.60,435.12 1602.60,452.08 1587.60,460.55 1572.60,452.08 1572.60,435.12" fill="#ff8800" stroke="#ee7f00" stroke-width="0.9"/>
<polygon points="1620.60,426.65 1635.60,435.12 1635.60,452.08 1620.60,460.55 1605.60,452.08 1605.60,435.12" fill="#ff8800" stroke="#ee7f00" stroke-width="0.9"/>
<polygon points="1653.60,426.65 1668.60,435.12 1668.60,452.08 1653.60,460.55 1638.60,452.08 1638.60,435.12" fill="#ff8800" stroke="#ee7f00" stroke-width="0.9"/>
<polygon points="1686.60,426.65 1701.60,435.12 1701.60,452.08 1686.60,460.55 1671.60,452.08 1671.60,435.12" fill="#ff8800" stroke="#ee7f00" stroke-width="0.9"/>
<polygon points="1719.60,426.65 1734.60,435.12 1734.60,452.08 1719.60,460.55 1704.60,452.08 1704.60,435.12" fill="#eeee30" stroke="#dcb523" stroke-width="0.9"/>
<polygon points="1752.60,426.65 1767.60,435.12 1767.60,452.08 1752.60,460.55 1737.60,452.08 1737.60,435.12" fill="#eeee30" stroke="#dcb523" stroke-width="0.9"/>
<polygon points="1472.10,454.75 1487.10,463.23 1487.10,480.18 1472.10,488.65 1457.10,480.18 1457.10,463.23" fill="#eeee30" stroke="#dcb523" stroke-width="0.9"/>
<polygon points="1505.10,454.75 1520.10,463.23 1520.10,480.18 1505.10,488.65 1490.10,480.18 1490.10,463.23" fill="#eeee30" stroke="#dcb523" stroke-width="0.9"/>
<polygon points="1538.10,454.75 1553.10,463.23 1553.10,480.18 1538.10,488.65 1523.10,480.18 1523.10,463.23" fill="#eeee30" stroke="#dcb523" stroke-width="0.9"/>
<polygon points="1571.10,454.75 1586.10,463.23 1586.10,480.18 1571.10,488.65 1556.10,480.18 1556.10,463.23" fill="#eeee30" stroke="#dcb523" stroke-width="0.9"/>
<polygon points="1604.10,454.75 1619.10,463.23 1619.10,480.18 1604.10,488.65 1589.10,480.18 1589.10,463.23" fill="#eeee30" stroke="#dcb523" stroke-width="0.9"/>
<polygon points="1637.10,454.75 1652.10,463.23 1652.10,480.18 1637.10,488.65 1622.10,480.18 1622.10,463.23" fill="#eeee30" stroke="#dcb523" stroke-width="0.9"/>
<polygon points="1670.10,454.75 1685.10,463.23 1685.10,480.18 1670.10,488.65 1655.10,480.18 1655.10,463.23" fill="#eeee30" stroke="#dcb523" stroke-width="0.9"/>
<polygon points="1703.10,454.75 1718.10,463.23 1718.10,480.18 1703.10,488.65 1688.10,480.18 1688.10,463.23" fill="#eeee30" stroke="#dcb523" stroke-width="0.9"/>
<polygon points="1736.10,454.75 1751.10,463.23 1751.10,480.18 1736.10,488.65 1721.10,480.18 1721.10,463.23" fill="#eeee30" stroke="#dcb523" stroke-width="0.9"/>
<polygon points="1769.10,454.75 1784.10,463.23 1784.10,480.18 1769.10,488.65 1754.10,480.18 1754.10,463.23" fill="#eeee30" stroke="#dcb523" stroke-width="0.9"/>
<polygon points="1455.60,482.85 1470.60,491.32 1470.60,508.28 1455.60,516.75 1440.60,508.28 1440.60,491.32" fill="#eeee30" stroke="#dcb523" stroke-width="0.9"/>
<polygon points="1488.60,482.85 1503.60,491.32 1503.60,508.28 1488.60,516.75 1473.60,508.28 1473.60,491.32" fill="#eeee30" stroke="#dcb523" stroke-width="0.9"/>
<polygon points="1521.60,482.85 1536.60,491.32 1536.60,508.28 1521.60,516.75 1506.60,508.28 1506.60,491.32" fill="#eeee30" stroke="#dcb523" stroke-width="0.9"/>
<polygon points="1554.60,482.85 1569.60,491.32 1569.60,508.28 1554.60,516.75 1539.60,508.28 1539.60,491.32" fill="#eeee30" stroke="#dcb523" stroke-width="0.9"/>
<polygon points="1587.60,482.85 1602.60,491.32 1602.60,508.28 1587.60,516.75 1572.60,508.28 1572.60,491.32" fill="#eeee30" stroke="#dcb523" stroke-width="0.9"/>
<polygon points="1620.60,482.85 1635.60,491.32 1635.60,508.28 1620.60,516.75 1605.60,508.28 1605.60,491.32" fill="#eeee30" stroke="#dcb523" stroke-width="0.9"/>
<polygon points="1653.60,482.85 1668.60,491.32 1668.60,508.28 1653.60,516.75 1638.60,508.28 1638.60,491.32" fill="#82c060" stroke="#70aa52" stroke-width="0.9"/>
<polygon points="1686.60,482.85 1701.60,491.32 1701.60,508.28 1686.60,516.75 1671.60,508.28 1671.60,491.32" fill="#82c060" stroke="#70aa52" stroke-width="0.9"/>
<polygon points="1719.60,482.85 1734.60,491.32 1734.60,508.28 1719.60,516.75 1704.60,508.28 1704.60,491.32" fill="#82c060" stroke="#70aa52" stroke-width="0.9"/>
<polygon points="1752.60,482.85 1767.60,491.32 1767.60,508.28 1752.60,516.75 1737.60,508.28 1737.60,491.32" fill="#82c060" stroke="#70aa52" stroke-width="0.9"/>
<polygon points="1472.10,510.95 1487.10,519.43 1487.10,536.38 1472.10,544.85 1457.10,536.38 1457.10,519.43" fill="#82c060" stroke="#70aa52" stroke-width="0.9"/>
<polygon points="1505.10,510.95 1520.10,519.43 1520.10,536.38 1505.10,544.85 1490.10,536.38 1490.10,519.43" fill="#82c060" stroke="#70aa52" stroke-width="0.9"/>
<polygon points="1538.10,510.95 1553.10,519.43 1553.10,536.38 1538.10,544.85 1523.10,536.38 1523.10,519.43" fill="#82c060" stroke="#70aa52" stroke-width="0.9"/>
<polygon points="1571.10,510.95 1586.10,519.43 1586.10,536.38 1571.10,544.85 1556.10,536.38 1556.10,519.43" fill="#82c060" stroke="#70aa52" stroke-width="0.9"/>
<polygon points="1604.10,510.95 1619.10,519.43 1619.10,536.38 1604.10,544.85 1589.10,536.38 1589.10,519.43" fill="#82c060" stroke="#70aa52" stroke-width="0.9"/>
<polygon points="1637.10,510.95 1652.10,519.43 1652.10,536.38 1637.10,544.85 1622.10,536.38 1622.10,519.43" fill="#82c060" stroke="#70aa52" stroke-width="0.9"/>
<polygon points="1670.10,510.95 1685.10,519.43 1685.10,536.38 1670.10,544.85 1655.10,536.38 1655.10,519.43" fill="#82c060" stroke="#70aa52" stroke-width="0.9"/>
<polygon points="1703.10,510.95 1718.10,519.43 1718.10,536.38 1703.10,544.85 1688.10,536.38 1688.10,519.43" fill="#82c060" stroke="#70aa52" stroke-width="0.9"/>
<polygon points="1736.10,510.95 1751.10,519.43 1751.10,536.38 1736.10,544.85 1721.10,536.38 1721.10,519.43" fill="#82c060" stroke="#70aa52" stroke-width="0.9"/>
<polygon points="1769.10,510.95 1784.10,519.43 1784.10,536.38 1769.10,544.85 1754.10,536.38 1754.10,519.43" fill="#82c060" stroke="#70aa52" stroke-width="0.9"/>
<polygon points="1455.60,539.05 1470.60,547.52 1470.60,564.48 1455.60,572.95 1440.60,564.48 1440.60,547.52" fill="#82c060" stroke="#70aa52" stroke-width="0.9"/>
<polygon points="1488.60,539.05 1503.60,547.52 1503.60,564.48 1488.60,572.95 1473.60,564.48 1473.60,547.52" fill="#82c060" stroke="#70aa52" stroke-width="0.9"/>
<polygon points="1521.60,539.05 1536.60,547.52 1536.60,564.48 1521.60,572.95 1506.60,564.48 1506.60,547.52" fill="#82c060" stroke="#70aa52" stroke-width="0.9"/>
<polygon points="1554.60,539.05 1569.60,547.52 1569.60,564.48 1554.60,572.95 1539.60,564.48 1539.60,547.52" fill="#82c060" stroke="#70aa52" stroke-width="0.9"/>
<polygon points="1587.60,539.05 1602.60,547.52 1602.60,564.48 1587.60,572.95 1572.60,564.48 1572.60,547.52" fill="#82c060" stroke="#70aa52" stroke-width="0.9"/>
<polygon points="1620.60,539.05 1635.60,547.52 1635.60,564.48 1620.60,572.95 1605.60,564.48 1605.60,547.52" fill="#82c060" stroke="#70aa52" stroke-width="0.9"/>
<polygon points="1653.60,539.05 1668.60,547.52 1668.60,564.48 1653.60,572.95 1638.60,564.48 1638.60,547.52" fill="#82c060" stroke="#70aa52" stroke-width="0.9"/>
<polygon points="1686.60,539.05 1701.60,547.52 1701.60,564.48 1686.60,572.95 1671.60,564.48 1671.60,547.52" fill="#82c060" stroke="#70aa52" stroke-width="0.9"/>
<polygon points="1719.60,539.05 1734.60,547.52 1734.60,564.48 1719.60,572.95 1704.60,564.48 1704.60,547.52" fill="#82c060" stroke="#70aa52" stroke-width="0.9"/>
<polygon points="1752.60,539.05 1767.60,547.52 1767.60,564.48 1752.60,572.95 1737.60,564.48 1737.60,547.52" fill="#82c060" stroke="#70aa52" stroke-width="0.9"/>
<polygon points="1472.10,567.15 1487.10,575.62 1487.10,592.58 1472.10,601.05 1457.10,592.58 1457.10,575.62" fill="#82c060" stroke="#70aa52" stroke-width="0.9"/>
<polygon points="1505.10,567.15 1520.10,575.62 1520.10,592.58 1505.10,601.05 1490.10,592.58 1490.10,575.62" fill="#82c060" stroke="#70aa52" stroke-width="0.9"/>
<polygon points="1538.10,567.15 1553.10,575.62 1553.10,592.58 1538.10,601.05 1523.10,592.58 1523.10,575.62" fill="#82c060" stroke="#70aa52" stroke-width="0.9"/>
<polygon points="1571.10,567.15 1586.10,575.62 1586.10,592.58 1571.10,601.05 1556.10,592.58 1556.10,575.62" fill="#82c060" stroke="#70aa52" stroke-width="0.9"/>
<polygon points="1604.10,567.15 1619.10,575.62 1619.10,592.58 1604.10,601.05 1589.10,592.58 1589.10,575.62" fill="#82c060" stroke="#70aa52" stroke-width="0.9"/>
<polygon points="1637.10,567.15 1652.10,575.62 1652.10,592.58 1637.10,601.05 1622.10,592.58 1622.10,575.62" fill="#82c060" stroke="#70aa52" stroke-width="0.9"/>
<polygon points="1670.10,567.15 1685.10,575.62 1685.10,592.58 1670.10,601.05 1655.10,592.58 1655.10,575.62" fill="#82c060" stroke="#70aa52" stroke-width="0.9"/>
<rect x="1812.4" y="420.3" width="361.6" height="131.2" rx="5" fill="#f6f6f6" stroke="#e2e2e2" stroke-width="1.2"/>
<polygon points="1836.30,426.00 1852.50,435.15 1852.50,453.45 1836.30,462.60 1820.10,453.45 1820.10,435.15" fill="#ffffff"/>
<polygon points="1869.30,426.00 1885.50,435.15 1885.50,453.45 1869.30,462.60 1853.10,453.45 1853.10,435.15" fill="#ffffff"/>
<polygon points="1902.30,426.00 1918.50,435.15 1918.50,453.45 1902.30,462.60 1886.10,453.45 1886.10,435.15" fill="#ffffff"/>
<polygon points="1935.30,426.00 1951.50,435.15 1951.50,453.45 1935.30,462.60 1919.10,453.45 1919.10,435.15" fill="#ffffff"/>
<polygon points="1968.30,426.00 1984.50,435.15 1984.50,453.45 1968.30,462.60 1952.10,453.45 1952.10,435.15" fill="#ffffff"/>
<polygon points="2001.30,426.00 2017.50,435.15 2017.50,453.45 2001.30,462.60 1985.10,453.45 1985.10,435.15" fill="#ffffff"/>
<polygon points="2034.30,426.00 2050.50,435.15 2050.50,453.45 2034.30,462.60 2018.10,453.45 2018.10,435.15" fill="#ffffff"/>
<polygon points="2067.30,426.00 2083.50,435.15 2083.50,453.45 2067.30,462.60 2051.10,453.45 2051.10,435.15" fill="#ffffff"/>
<polygon points="2100.30,426.00 2116.50,435.15 2116.50,453.45 2100.30,462.60 2084.10,453.45 2084.10,435.15" fill="#ffffff"/>
<polygon points="2133.30,426.00 2149.50,435.15 2149.50,453.45 2133.30,462.60 2117.10,453.45 2117.10,435.15" fill="#ffffff"/>
<polygon points="1852.80,454.10 1869.00,463.25 1869.00,481.55 1852.80,490.70 1836.60,481.55 1836.60,463.25" fill="#ffffff"/>
<polygon points="1885.80,454.10 1902.00,463.25 1902.00,481.55 1885.80,490.70 1869.60,481.55 1869.60,463.25" fill="#ffffff"/>
<polygon points="1918.80,454.10 1935.00,463.25 1935.00,481.55 1918.80,490.70 1902.60,481.55 1902.60,463.25" fill="#ffffff"/>
<polygon points="1951.80,454.10 1968.00,463.25 1968.00,481.55 1951.80,490.70 1935.60,481.55 1935.60,463.25" fill="#ffffff"/>
<polygon points="1984.80,454.10 2001.00,463.25 2001.00,481.55 1984.80,490.70 1968.60,481.55 1968.60,463.25" fill="#ffffff"/>
<polygon points="2017.80,454.10 2034.00,463.25 2034.00,481.55 2017.80,490.70 2001.60,481.55 2001.60,463.25" fill="#ffffff"/>
<polygon points="2050.80,454.10 2067.00,463.25 2067.00,481.55 2050.80,490.70 2034.60,481.55 2034.60,463.25" fill="#ffffff"/>
<polygon points="2083.80,454.10 2100.00,463.25 2100.00,481.55 2083.80,490.70 2067.60,481.55 2067.60,463.25" fill="#ffffff"/>
<polygon points="2116.80,454.10 2133.00,463.25 2133.00,481.55 2116.80,490.70 2100.60,481.55 2100.60,463.25" fill="#ffffff"/>
<polygon points="2149.80,454.10 2166.00,463.25 2166.00,481.55 2149.80,490.70 2133.60,481.55 2133.60,463.25" fill="#ffffff"/>
<polygon points="1836.30,482.20 1852.50,491.35 1852.50,509.65 1836.30,518.80 1820.10,509.65 1820.10,491.35" fill="#ffffff"/>
<polygon points="1869.30,482.20 1885.50,491.35 1885.50,509.65 1869.30,518.80 1853.10,509.65 1853.10,491.35" fill="#ffffff"/>
<polygon points="1902.30,482.20 1918.50,491.35 1918.50,509.65 1902.30,518.80 1886.10,509.65 1886.10,491.35" fill="#ffffff"/>
<polygon points="1935.30,482.20 1951.50,491.35 1951.50,509.65 1935.30,518.80 1919.10,509.65 1919.10,491.35" fill="#ffffff"/>
<polygon points="1968.30,482.20 1984.50,491.35 1984.50,509.65 1968.30,518.80 1952.10,509.65 1952.10,491.35" fill="#ffffff"/>
<polygon points="2001.30,482.20 2017.50,491.35 2017.50,509.65 2001.30,518.80 1985.10,509.65 1985.10,491.35" fill="#ffffff"/>
<polygon points="2034.30,482.20 2050.50,491.35 2050.50,509.65 2034.30,518.80 2018.10,509.65 2018.10,491.35" fill="#ffffff"/>
<polygon points="2067.30,482.20 2083.50,491.35 2083.50,509.65 2067.30,518.80 2051.10,509.65 2051.10,491.35" fill="#ffffff"/>
<polygon points="2100.30,482.20 2116.50,491.35 2116.50,509.65 2100.30,518.80 2084.10,509.65 2084.10,491.35" fill="#ffffff"/>
<polygon points="2133.30,482.20 2149.50,491.35 2149.50,509.65 2133.30,518.80 2117.10,509.65 2117.10,491.35" fill="#ffffff"/>
<polygon points="1852.80,510.30 1869.00,519.45 1869.00,537.75 1852.80,546.90 1836.60,537.75 1836.60,519.45" fill="#ffffff"/>
<polygon points="1885.80,510.30 1902.00,519.45 1902.00,537.75 1885.80,546.90 1869.60,537.75 1869.60,519.45" fill="#ffffff"/>
<polygon points="1918.80,510.30 1935.00,519.45 1935.00,537.75 1918.80,546.90 1902.60,537.75 1902.60,519.45" fill="#ffffff"/>
<polygon points="1951.80,510.30 1968.00,519.45 1968.00,537.75 1951.80,546.90 1935.60,537.75 1935.60,519.45" fill="#ffffff"/>
<polygon points="1984.80,510.30 2001.00,519.45 2001.00,537.75 1984.80,546.90 1968.60,537.75 1968.60,519.45" fill="#ffffff"/>
<polygon points="2017.80,510.30 2034.00,519.45 2034.00,537.75 2017.80,546.90 2001.60,537.75 2001.60,519.45" fill="#ffffff"/>
<polygon points="2050.80,510.30 2067.00,519.45 2067.00,537.75 2050.80,546.90 2034.60,537.75 2034.60,519.45" fill="#ffffff"/>
<polygon points="2083.80,510.30 2100.00,519.45 2100.00,537.75 2083.80,546.90 2067.60,537.75 2067.60,519.45" fill="#ffffff"/>
<polygon points="2116.80,510.30 2133.00,519.45 2133.00,537.75 2116.80,546.90 2100.60,537.75 2100.60,519.45" fill="#ffffff"/>
<polygon points="2149.80,510.30 2166.00,519.45 2166.00,537.75 2149.80,546.90 2133.60,537.75 2133.60,519.45" fill="#ffffff"/>
<polygon points="1836.30,427.35 1851.30,435.82 1851.30,452.78 1836.30,461.25 1821.30,452.78 1821.30,435.82" fill="#de3519" stroke="#c8301a" stroke-width="0.9"/>
<polygon points="1869.30,427.35 1884.30,435.82 1884.30,452.78 1869.30,461.25 1854.30,452.78 1854.30,435.82" fill="#de3519" stroke="#c8301a" stroke-width="0.9"/>
<polygon points="1902.30,427.35 1917.30,435.82 1917.30,452.78 1902.30,461.25 1887.30,452.78 1887.30,435.82" fill="#ff8800" stroke="#ee7f00" stroke-width="0.9"/>
<polygon points="1935.30,427.35 1950.30,435.82 1950.30,452.78 1935.30,461.25 1920.30,452.78 1920.30,435.82" fill="#ff8800" stroke="#ee7f00" stroke-width="0.9"/>
<polygon points="1968.30,427.35 1983.30,435.82 1983.30,452.78 1968.30,461.25 1953.30,452.78 1953.30,435.82" fill="#ff8800" stroke="#ee7f00" stroke-width="0.9"/>
<polygon points="2001.30,427.35 2016.30,435.82 2016.30,452.78 2001.30,461.25 1986.30,452.78 1986.30,435.82" fill="#ff8800" stroke="#ee7f00" stroke-width="0.9"/>
<polygon points="2034.30,427.35 2049.30,435.82 2049.30,452.78 2034.30,461.25 2019.30,452.78 2019.30,435.82" fill="#ff8800" stroke="#ee7f00" stroke-width="0.9"/>
<polygon points="2067.30,427.35 2082.30,435.82 2082.30,452.78 2067.30,461.25 2052.30,452.78 2052.30,435.82" fill="#ff8800" stroke="#ee7f00" stroke-width="0.9"/>
<polygon points="2100.30,427.35 2115.30,435.82 2115.30,452.78 2100.30,461.25 2085.30,452.78 2085.30,435.82" fill="#eeee30" stroke="#dcb523" stroke-width="0.9"/>
<polygon points="2133.30,427.35 2148.30,435.82 2148.30,452.78 2133.30,461.25 2118.30,452.78 2118.30,435.82" fill="#eeee30" stroke="#dcb523" stroke-width="0.9"/>
<polygon points="1852.80,455.45 1867.80,463.93 1867.80,480.88 1852.80,489.35 1837.80,480.88 1837.80,463.93" fill="#eeee30" stroke="#dcb523" stroke-width="0.9"/>
<polygon points="1885.80,455.45 1900.80,463.93 1900.80,480.88 1885.80,489.35 1870.80,480.88 1870.80,463.93" fill="#eeee30" stroke="#dcb523" stroke-width="0.9"/>
<polygon points="1918.80,455.45 1933.80,463.93 1933.80,480.88 1918.80,489.35 1903.80,480.88 1903.80,463.93" fill="#eeee30" stroke="#dcb523" stroke-width="0.9"/>
<polygon points="1951.80,455.45 1966.80,463.93 1966.80,480.88 1951.80,489.35 1936.80,480.88 1936.80,463.93" fill="#eeee30" stroke="#dcb523" stroke-width="0.9"/>
<polygon points="1984.80,455.45 1999.80,463.93 1999.80,480.88 1984.80,489.35 1969.80,480.88 1969.80,463.93" fill="#eeee30" stroke="#dcb523" stroke-width="0.9"/>
<polygon points="2017.80,455.45 2032.80,463.93 2032.80,480.88 2017.80,489.35 2002.80,480.88 2002.80,463.93" fill="#eeee30" stroke="#dcb523" stroke-width="0.9"/>
<polygon points="2050.80,455.45 2065.80,463.93 2065.80,480.88 2050.80,489.35 2035.80,480.88 2035.80,463.93" fill="#eeee30" stroke="#dcb523" stroke-width="0.9"/>
<polygon points="2083.80,455.45 2098.80,463.93 2098.80,480.88 2083.80,489.35 2068.80,480.88 2068.80,463.93" fill="#eeee30" stroke="#dcb523" stroke-width="0.9"/>
<polygon points="2116.80,455.45 2131.80,463.93 2131.80,480.88 2116.80,489.35 2101.80,480.88 2101.80,463.93" fill="#eeee30" stroke="#dcb523" stroke-width="0.9"/>
<polygon points="2149.80,455.45 2164.80,463.93 2164.80,480.88 2149.80,489.35 2134.80,480.88 2134.80,463.93" fill="#eeee30" stroke="#dcb523" stroke-width="0.9"/>
<polygon points="1836.30,483.55 1851.30,492.02 1851.30,508.98 1836.30,517.45 1821.30,508.98 1821.30,492.02" fill="#eeee30" stroke="#dcb523" stroke-width="0.9"/>
<polygon points="1869.30,483.55 1884.30,492.02 1884.30,508.98 1869.30,517.45 1854.30,508.98 1854.30,492.02" fill="#eeee30" stroke="#dcb523" stroke-width="0.9"/>
<polygon points="1902.30,483.55 1917.30,492.02 1917.30,508.98 1902.30,517.45 1887.30,508.98 1887.30,492.02" fill="#eeee30" stroke="#dcb523" stroke-width="0.9"/>
<polygon points="1935.30,483.55 1950.30,492.02 1950.30,508.98 1935.30,517.45 1920.30,508.98 1920.30,492.02" fill="#eeee30" stroke="#dcb523" stroke-width="0.9"/>
<polygon points="1968.30,483.55 1983.30,492.02 1983.30,508.98 1968.30,517.45 1953.30,508.98 1953.30,492.02" fill="#eeee30" stroke="#dcb523" stroke-width="0.9"/>
<polygon points="2001.30,483.55 2016.30,492.02 2016.30,508.98 2001.30,517.45 1986.30,508.98 1986.30,492.02" fill="#eeee30" stroke="#dcb523" stroke-width="0.9"/>
<polygon points="2034.30,483.55 2049.30,492.02 2049.30,508.98 2034.30,517.45 2019.30,508.98 2019.30,492.02" fill="#82c060" stroke="#70aa52" stroke-width="0.9"/>
<polygon points="2067.30,483.55 2082.30,492.02 2082.30,508.98 2067.30,517.45 2052.30,508.98 2052.30,492.02" fill="#82c060" stroke="#70aa52" stroke-width="0.9"/>
<polygon points="2100.30,483.55 2115.30,492.02 2115.30,508.98 2100.30,517.45 2085.30,508.98 2085.30,492.02" fill="#82c060" stroke="#70aa52" stroke-width="0.9"/>
<polygon points="2133.30,483.55 2148.30,492.02 2148.30,508.98 2133.30,517.45 2118.30,508.98 2118.30,492.02" fill="#82c060" stroke="#70aa52" stroke-width="0.9"/>
<polygon points="1852.80,511.65 1867.80,520.12 1867.80,537.08 1852.80,545.55 1837.80,537.08 1837.80,520.12" fill="#82c060" stroke="#70aa52" stroke-width="0.9"/>
<polygon points="1885.80,511.65 1900.80,520.12 1900.80,537.08 1885.80,545.55 1870.80,537.08 1870.80,520.12" fill="#82c060" stroke="#70aa52" stroke-width="0.9"/>
<polygon points="1918.80,511.65 1933.80,520.12 1933.80,537.08 1918.80,545.55 1903.80,537.08 1903.80,520.12" fill="#82c060" stroke="#70aa52" stroke-width="0.9"/>
<polygon points="1951.80,511.65 1966.80,520.12 1966.80,537.08 1951.80,545.55 1936.80,537.08 1936.80,520.12" fill="#82c060" stroke="#70aa52" stroke-width="0.9"/>
<polygon points="1984.80,511.65 1999.80,520.12 1999.80,537.08 1984.80,545.55 1969.80,537.08 1969.80,520.12" fill="#82c060" stroke="#70aa52" stroke-width="0.9"/>
<polygon points="2017.80,511.65 2032.80,520.12 2032.80,537.08 2017.80,545.55 2002.80,537.08 2002.80,520.12" fill="#82c060" stroke="#70aa52" stroke-width="0.9"/>
<polygon points="2050.80,511.65 2065.80,520.12 2065.80,537.08 2050.80,545.55 2035.80,537.08 2035.80,520.12" fill="#82c060" stroke="#70aa52" stroke-width="0.9"/>
<polygon points="2083.80,511.65 2098.80,520.12 2098.80,537.08 2083.80,545.55 2068.80,537.08 2068.80,520.12" fill="#82c060" stroke="#70aa52" stroke-width="0.9"/>
<polygon points="2116.80,511.65 2131.80,520.12 2131.80,537.08 2116.80,545.55 2101.80,537.08 2101.80,520.12" fill="#82c060" stroke="#70aa52" stroke-width="0.9"/>
<polygon points="2149.80,511.65 2164.80,520.12 2164.80,537.08 2149.80,545.55 2134.80,537.08 2134.80,520.12" fill="#82c060" stroke="#70aa52" stroke-width="0.9"/>
<rect x="939.7" y="682.4" width="473.6" height="104.3" rx="5" fill="#f6f6f6" stroke="#e2e2e2" stroke-width="1.2"/>
<polygon points="963.60,688.10 979.80,697.25 979.80,715.55 963.60,724.70 947.40,715.55 947.40,697.25" fill="#ffffff"/>
<polygon points="996.60,688.10 1012.80,697.25 1012.80,715.55 996.60,724.70 980.40,715.55 980.40,697.25" fill="#ffffff"/>
<polygon points="1029.60,688.10 1045.80,697.25 1045.80,715.55 1029.60,724.70 1013.40,715.55 1013.40,697.25" fill="#ffffff"/>
<polygon points="1062.60,688.10 1078.80,697.25 1078.80,715.55 1062.60,724.70 1046.40,715.55 1046.40,697.25" fill="#ffffff"/>
<polygon points="1095.60,688.10 1111.80,697.25 1111.80,715.55 1095.60,724.70 1079.40,715.55 1079.40,697.25" fill="#ffffff"/>
<polygon points="1128.60,688.10 1144.80,697.25 1144.80,715.55 1128.60,724.70 1112.40,715.55 1112.40,697.25" fill="#ffffff"/>
<polygon points="1161.60,688.10 1177.80,697.25 1177.80,715.55 1161.60,724.70 1145.40,715.55 1145.40,697.25" fill="#ffffff"/>
<polygon points="1194.60,688.10 1210.80,697.25 1210.80,715.55 1194.60,724.70 1178.40,715.55 1178.40,697.25" fill="#ffffff"/>
<polygon points="1227.60,688.10 1243.80,697.25 1243.80,715.55 1227.60,724.70 1211.40,715.55 1211.40,697.25" fill="#ffffff"/>
<polygon points="1260.60,688.10 1276.80,697.25 1276.80,715.55 1260.60,724.70 1244.40,715.55 1244.40,697.25" fill="#ffffff"/>
<polygon points="1293.60,688.10 1309.80,697.25 1309.80,715.55 1293.60,724.70 1277.40,715.55 1277.40,697.25" fill="#ffffff"/>
<polygon points="1326.60,688.10 1342.80,697.25 1342.80,715.55 1326.60,724.70 1310.40,715.55 1310.40,697.25" fill="#ffffff"/>
<polygon points="1359.60,688.10 1375.80,697.25 1375.80,715.55 1359.60,724.70 1343.40,715.55 1343.40,697.25" fill="#ffffff"/>
<polygon points="980.10,716.20 996.30,725.35 996.30,743.65 980.10,752.80 963.90,743.65 963.90,725.35" fill="#ffffff"/>
<polygon points="1013.10,716.20 1029.30,725.35 1029.30,743.65 1013.10,752.80 996.90,743.65 996.90,725.35" fill="#ffffff"/>
<polygon points="1046.10,716.20 1062.30,725.35 1062.30,743.65 1046.10,752.80 1029.90,743.65 1029.90,725.35" fill="#ffffff"/>
<polygon points="1079.10,716.20 1095.30,725.35 1095.30,743.65 1079.10,752.80 1062.90,743.65 1062.90,725.35" fill="#ffffff"/>
<polygon points="1112.10,716.20 1128.30,725.35 1128.30,743.65 1112.10,752.80 1095.90,743.65 1095.90,725.35" fill="#ffffff"/>
<polygon points="1145.10,716.20 1161.30,725.35 1161.30,743.65 1145.10,752.80 1128.90,743.65 1128.90,725.35" fill="#ffffff"/>
<polygon points="1178.10,716.20 1194.30,725.35 1194.30,743.65 1178.10,752.80 1161.90,743.65 1161.90,725.35" fill="#ffffff"/>
<polygon points="1211.10,716.20 1227.30,725.35 1227.30,743.65 1211.10,752.80 1194.90,743.65 1194.90,725.35" fill="#ffffff"/>
<polygon points="1244.10,716.20 1260.30,725.35 1260.30,743.65 1244.10,752.80 1227.90,743.65 1227.90,725.35" fill="#ffffff"/>
<polygon points="1277.10,716.20 1293.30,725.35 1293.30,743.65 1277.10,752.80 1260.90,743.65 1260.90,725.35" fill="#ffffff"/>
<polygon points="1310.10,716.20 1326.30,725.35 1326.30,743.65 1310.10,752.80 1293.90,743.65 1293.90,725.35" fill="#ffffff"/>
<polygon points="1343.10,716.20 1359.30,725.35 1359.30,743.65 1343.10,752.80 1326.90,743.65 1326.90,725.35" fill="#ffffff"/>
<polygon points="1376.10,716.20 1392.30,725.35 1392.30,743.65 1376.10,752.80 1359.90,743.65 1359.90,725.35" fill="#ffffff"/>
<polygon points="963.60,744.30 979.80,753.45 979.80,771.75 963.60,780.90 947.40,771.75 947.40,753.45" fill="#ffffff"/>
<polygon points="996.60,744.30 1012.80,753.45 1012.80,771.75 996.60,780.90 980.40,771.75 980.40,753.45" fill="#ffffff"/>
<polygon points="1029.60,744.30 1045.80,753.45 1045.80,771.75 1029.60,780.90 1013.40,771.75 1013.40,753.45" fill="#ffffff"/>
<polygon points="1062.60,744.30 1078.80,753.45 1078.80,771.75 1062.60,780.90 1046.40,771.75 1046.40,753.45" fill="#ffffff"/>
<polygon points="1095.60,744.30 1111.80,753.45 1111.80,771.75 1095.60,780.90 1079.40,771.75 1079.40,753.45" fill="#ffffff"/>
<polygon points="1128.60,744.30 1144.80,753.45 1144.80,771.75 1128.60,780.90 1112.40,771.75 1112.40,753.45" fill="#ffffff"/>
<polygon points="1161.60,744.30 1177.80,753.45 1177.80,771.75 1161.60,780.90 1145.40,771.75 1145.40,753.45" fill="#ffffff"/>
<polygon points="1194.60,744.30 1210.80,753.45 1210.80,771.75 1194.60,780.90 1178.40,771.75 1178.40,753.45" fill="#ffffff"/>
<polygon points="1227.60,744.30 1243.80,753.45 1243.80,771.75 1227.60,780.90 1211.40,771.75 1211.40,753.45" fill="#ffffff"/>
<polygon points="1260.60,744.30 1276.80,753.45 1276.80,771.75 1260.60,780.90 1244.40,771.75 1244.40,753.45" fill="#ffffff"/>
<polygon points="1293.60,744.30 1309.80,753.45 1309.80,771.75 1293.60,780.90 1277.40,771.75 1277.40,753.45" fill="#ffffff"/>
<polygon points="1326.60,744.30 1342.80,753.45 1342.80,771.75 1326.60,780.90 1310.40,771.75 1310.40,753.45" fill="#ffffff"/>
<polygon points="1359.60,744.30 1375.80,753.45 1375.80,771.75 1359.60,780.90 1343.40,771.75 1343.40,753.45" fill="#ffffff"/>
<polygon points="1392.60,744.30 1408.80,753.45 1408.80,771.75 1392.60,780.90 1376.40,771.75 1376.40,753.45" fill="#ffffff"/>
<polygon points="963.60,689.45 978.60,697.92 978.60,714.88 963.60,723.35 948.60,714.88 948.60,697.92" fill="#ff8800" stroke="#ee7f00" stroke-width="0.9"/>
<polygon points="996.60,689.45 1011.60,697.92 1011.60,714.88 996.60,723.35 981.60,714.88 981.60,697.92" fill="#ff8800" stroke="#ee7f00" stroke-width="0.9"/>
<polygon points="1029.60,689.45 1044.60,697.92 1044.60,714.88 1029.60,723.35 1014.60,714.88 1014.60,697.92" fill="#ff8800" stroke="#ee7f00" stroke-width="0.9"/>
<polygon points="1062.60,689.45 1077.60,697.92 1077.60,714.88 1062.60,723.35 1047.60,714.88 1047.60,697.92" fill="#ff8800" stroke="#ee7f00" stroke-width="0.9"/>
<polygon points="1095.60,689.45 1110.60,697.92 1110.60,714.88 1095.60,723.35 1080.60,714.88 1080.60,697.92" fill="#ff8800" stroke="#ee7f00" stroke-width="0.9"/>
<polygon points="1128.60,689.45 1143.60,697.92 1143.60,714.88 1128.60,723.35 1113.60,714.88 1113.60,697.92" fill="#ff8800" stroke="#ee7f00" stroke-width="0.9"/>
<polygon points="1161.60,689.45 1176.60,697.92 1176.60,714.88 1161.60,723.35 1146.60,714.88 1146.60,697.92" fill="#eeee30" stroke="#dcb523" stroke-width="0.9"/>
<polygon points="1194.60,689.45 1209.60,697.92 1209.60,714.88 1194.60,723.35 1179.60,714.88 1179.60,697.92" fill="#eeee30" stroke="#dcb523" stroke-width="0.9"/>
<polygon points="1227.60,689.45 1242.60,697.92 1242.60,714.88 1227.60,723.35 1212.60,714.88 1212.60,697.92" fill="#eeee30" stroke="#dcb523" stroke-width="0.9"/>
<polygon points="1260.60,689.45 1275.60,697.92 1275.60,714.88 1260.60,723.35 1245.60,714.88 1245.60,697.92" fill="#eeee30" stroke="#dcb523" stroke-width="0.9"/>
<polygon points="1293.60,689.45 1308.60,697.92 1308.60,714.88 1293.60,723.35 1278.60,714.88 1278.60,697.92" fill="#eeee30" stroke="#dcb523" stroke-width="0.9"/>
<polygon points="1326.60,689.45 1341.60,697.92 1341.60,714.88 1326.60,723.35 1311.60,714.88 1311.60,697.92" fill="#eeee30" stroke="#dcb523" stroke-width="0.9"/>
<polygon points="1359.60,689.45 1374.60,697.92 1374.60,714.88 1359.60,723.35 1344.60,714.88 1344.60,697.92" fill="#eeee30" stroke="#dcb523" stroke-width="0.9"/>
<polygon points="980.10,717.55 995.10,726.02 995.10,742.98 980.10,751.45 965.10,742.98 965.10,726.02" fill="#eeee30" stroke="#dcb523" stroke-width="0.9"/>
<polygon points="1013.10,717.55 1028.10,726.02 1028.10,742.98 1013.10,751.45 998.10,742.98 998.10,726.02" fill="#eeee30" stroke="#dcb523" stroke-width="0.9"/>
<polygon points="1046.10,717.55 1061.10,726.02 1061.10,742.98 1046.10,751.45 1031.10,742.98 1031.10,726.02" fill="#eeee30" stroke="#dcb523" stroke-width="0.9"/>
<polygon points="1079.10,717.55 1094.10,726.02 1094.10,742.98 1079.10,751.45 1064.10,742.98 1064.10,726.02" fill="#eeee30" stroke="#dcb523" stroke-width="0.9"/>
<polygon points="1112.10,717.55 1127.10,726.02 1127.10,742.98 1112.10,751.45 1097.10,742.98 1097.10,726.02" fill="#eeee30" stroke="#dcb523" stroke-width="0.9"/>
<polygon points="1145.10,717.55 1160.10,726.02 1160.10,742.98 1145.10,751.45 1130.10,742.98 1130.10,726.02" fill="#eeee30" stroke="#dcb523" stroke-width="0.9"/>
<polygon points="1178.10,717.55 1193.10,726.02 1193.10,742.98 1178.10,751.45 1163.10,742.98 1163.10,726.02" fill="#eeee30" stroke="#dcb523" stroke-width="0.9"/>
<polygon points="1211.10,717.55 1226.10,726.02 1226.10,742.98 1211.10,751.45 1196.10,742.98 1196.10,726.02" fill="#82c060" stroke="#70aa52" stroke-width="0.9"/>
<polygon points="1244.10,717.55 1259.10,726.02 1259.10,742.98 1244.10,751.45 1229.10,742.98 1229.10,726.02" fill="#82c060" stroke="#70aa52" stroke-width="0.9"/>
<polygon points="1277.10,717.55 1292.10,726.02 1292.10,742.98 1277.10,751.45 1262.10,742.98 1262.10,726.02" fill="#82c060" stroke="#70aa52" stroke-width="0.9"/>
<polygon points="1310.10,717.55 1325.10,726.02 1325.10,742.98 1310.10,751.45 1295.10,742.98 1295.10,726.02" fill="#82c060" stroke="#70aa52" stroke-width="0.9"/>
<polygon points="1343.10,717.55 1358.10,726.02 1358.10,742.98 1343.10,751.45 1328.10,742.98 1328.10,726.02" fill="#82c060" stroke="#70aa52" stroke-width="0.9"/>
<polygon points="1376.10,717.55 1391.10,726.02 1391.10,742.98 1376.10,751.45 1361.10,742.98 1361.10,726.02" fill="#82c060" stroke="#70aa52" stroke-width="0.9"/>
<polygon points="963.60,745.65 978.60,754.12 978.60,771.08 963.60,779.55 948.60,771.08 948.60,754.12" fill="#82c060" stroke="#70aa52" stroke-width="0.9"/>
<polygon points="996.60,745.65 1011.60,754.12 1011.60,771.08 996.60,779.55 981.60,771.08 981.60,754.12" fill="#82c060" stroke="#70aa52" stroke-width="0.9"/>
<polygon points="1029.60,745.65 1044.60,754.12 1044.60,771.08 1029.60,779.55 1014.60,771.08 1014.60,754.12" fill="#82c060" stroke="#70aa52" stroke-width="0.9"/>
<polygon points="1062.60,745.65 1077.60,754.12 1077.60,771.08 1062.60,779.55 1047.60,771.08 1047.60,754.12" fill="#82c060" stroke="#70aa52" stroke-width="0.9"/>
<polygon points="1095.60,745.65 1110.60,754.12 1110.60,771.08 1095.60,779.55 1080.60,771.08 1080.60,754.12" fill="#82c060" stroke="#70aa52" stroke-width="0.9"/>
<polygon points="1128.60,745.65 1143.60,754.12 1143.60,771.08 1128.60,779.55 1113.60,771.08 1113.60,754.12" fill="#82c060" stroke="#70aa52" stroke-width="0.9"/>
<polygon points="1161.60,745.65 1176.60,754.12 1176.60,771.08 1161.60,779.55 1146.60,771.08 1146.60,754.12" fill="#82c060" stroke="#70aa52" stroke-width="0.9"/>
<polygon points="1194.60,745.65 1209.60,754.12 1209.60,771.08 1194.60,779.55 1179.60,771.08 1179.60,754.12" fill="#82c060" stroke="#70aa52" stroke-width="0.9"/>
<polygon points="1227.60,745.65 1242.60,754.12 1242.60,771.08 1227.60,779.55 1212.60,771.08 1212.60,754.12" fill="#82c060" stroke="#70aa52" stroke-width="0.9"/>
<polygon points="1260.60,745.65 1275.60,754.12 1275.60,771.08 1260.60,779.55 1245.60,771.08 1245.60,754.12" fill="#82c060" stroke="#70aa52" stroke-width="0.9"/>
<polygon points="1293.60,745.65 1308.60,754.12 1308.60,771.08 1293.60,779.55 1278.60,771.08 1278.60,754.12" fill="#82c060" stroke="#70aa52" stroke-width="0.9"/>
<polygon points="1326.60,745.65 1341.60,754.12 1341.60,771.08 1326.60,779.55 1311.60,771.08 1311.60,754.12" fill="#82c060" stroke="#70aa52" stroke-width="0.9"/>
<polygon points="1359.60,745.65 1374.60,754.12 1374.60,771.08 1359.60,779.55 1344.60,771.08 1344.60,754.12" fill="#82c060" stroke="#70aa52" stroke-width="0.9"/>
<polygon points="1392.60,745.65 1407.60,754.12 1407.60,771.08 1392.60,779.55 1377.60,771.08 1377.60,754.12" fill="#82c060" stroke="#70aa52" stroke-width="0.9"/>
<rect x="1431.7" y="682.3" width="360.9" height="103.1" rx="5" fill="#f6f6f6" stroke="#e2e2e2" stroke-width="1.2"/>
<polygon points="1455.60,688.00 1471.80,697.15 1471.80,715.45 1455.60,724.60 1439.40,715.45 1439.40,697.15" fill="#ffffff"/>
<polygon points="1488.60,688.00 1504.80,697.15 1504.80,715.45 1488.60,724.60 1472.40,715.45 1472.40,697.15" fill="#ffffff"/>
<polygon points="1521.60,688.00 1537.80,697.15 1537.80,715.45 1521.60,724.60 1505.40,715.45 1505.40,697.15" fill="#ffffff"/>
<polygon points="1554.60,688.00 1570.80,697.15 1570.80,715.45 1554.60,724.60 1538.40,715.45 1538.40,697.15" fill="#ffffff"/>
<polygon points="1587.60,688.00 1603.80,697.15 1603.80,715.45 1587.60,724.60 1571.40,715.45 1571.40,697.15" fill="#ffffff"/>
<polygon points="1620.60,688.00 1636.80,697.15 1636.80,715.45 1620.60,724.60 1604.40,715.45 1604.40,697.15" fill="#ffffff"/>
<polygon points="1653.60,688.00 1669.80,697.15 1669.80,715.45 1653.60,724.60 1637.40,715.45 1637.40,697.15" fill="#ffffff"/>
<polygon points="1686.60,688.00 1702.80,697.15 1702.80,715.45 1686.60,724.60 1670.40,715.45 1670.40,697.15" fill="#ffffff"/>
<polygon points="1719.60,688.00 1735.80,697.15 1735.80,715.45 1719.60,724.60 1703.40,715.45 1703.40,697.15" fill="#ffffff"/>
<polygon points="1752.60,688.00 1768.80,697.15 1768.80,715.45 1752.60,724.60 1736.40,715.45 1736.40,697.15" fill="#ffffff"/>
<polygon points="1472.10,716.10 1488.30,725.25 1488.30,743.55 1472.10,752.70 1455.90,743.55 1455.90,725.25" fill="#ffffff"/>
<polygon points="1505.10,716.10 1521.30,725.25 1521.30,743.55 1505.10,752.70 1488.90,743.55 1488.90,725.25" fill="#ffffff"/>
<polygon points="1538.10,716.10 1554.30,725.25 1554.30,743.55 1538.10,752.70 1521.90,743.55 1521.90,725.25" fill="#ffffff"/>
<polygon points="1571.10,716.10 1587.30,725.25 1587.30,743.55 1571.10,752.70 1554.90,743.55 1554.90,725.25" fill="#ffffff"/>
<polygon points="1604.10,716.10 1620.30,725.25 1620.30,743.55 1604.10,752.70 1587.90,743.55 1587.90,725.25" fill="#ffffff"/>
<polygon points="1637.10,716.10 1653.30,725.25 1653.30,743.55 1637.10,752.70 1620.90,743.55 1620.90,725.25" fill="#ffffff"/>
<polygon points="1670.10,716.10 1686.30,725.25 1686.30,743.55 1670.10,752.70 1653.90,743.55 1653.90,725.25" fill="#ffffff"/>
<polygon points="1703.10,716.10 1719.30,725.25 1719.30,743.55 1703.10,752.70 1686.90,743.55 1686.90,725.25" fill="#ffffff"/>
<polygon points="1736.10,716.10 1752.30,725.25 1752.30,743.55 1736.10,752.70 1719.90,743.55 1719.90,725.25" fill="#ffffff"/>
<polygon points="1769.10,716.10 1785.30,725.25 1785.30,743.55 1769.10,752.70 1752.90,743.55 1752.90,725.25" fill="#ffffff"/>
<polygon points="1455.60,744.20 1471.80,753.35 1471.80,771.65 1455.60,780.80 1439.40,771.65 1439.40,753.35" fill="#ffffff"/>
<polygon points="1488.60,744.20 1504.80,753.35 1504.80,771.65 1488.60,780.80 1472.40,771.65 1472.40,753.35" fill="#ffffff"/>
<polygon points="1521.60,744.20 1537.80,753.35 1537.80,771.65 1521.60,780.80 1505.40,771.65 1505.40,753.35" fill="#ffffff"/>
<polygon points="1554.60,744.20 1570.80,753.35 1570.80,771.65 1554.60,780.80 1538.40,771.65 1538.40,753.35" fill="#ffffff"/>
<polygon points="1587.60,744.20 1603.80,753.35 1603.80,771.65 1587.60,780.80 1571.40,771.65 1571.40,753.35" fill="#ffffff"/>
<polygon points="1620.60,744.20 1636.80,753.35 1636.80,771.65 1620.60,780.80 1604.40,771.65 1604.40,753.35" fill="#ffffff"/>
<polygon points="1653.60,744.20 1669.80,753.35 1669.80,771.65 1653.60,780.80 1637.40,771.65 1637.40,753.35" fill="#ffffff"/>
<polygon points="1686.60,744.20 1702.80,753.35 1702.80,771.65 1686.60,780.80 1670.40,771.65 1670.40,753.35" fill="#ffffff"/>
<polygon points="1719.60,744.20 1735.80,753.35 1735.80,771.65 1719.60,780.80 1703.40,771.65 1703.40,753.35" fill="#ffffff"/>
<polygon points="1752.60,744.20 1768.80,753.35 1768.80,771.65 1752.60,780.80 1736.40,771.65 1736.40,753.35" fill="#ffffff"/>
<polygon points="1455.60,689.35 1470.60,697.82 1470.60,714.77 1455.60,723.25 1440.60,714.77 1440.60,697.82" fill="#de3519" stroke="#c8301a" stroke-width="0.9"/>
<polygon points="1488.60,689.35 1503.60,697.82 1503.60,714.77 1488.60,723.25 1473.60,714.77 1473.60,697.82" fill="#de3519" stroke="#c8301a" stroke-width="0.9"/>
<polygon points="1521.60,689.35 1536.60,697.82 1536.60,714.77 1521.60,723.25 1506.60,714.77 1506.60,697.82" fill="#ff8800" stroke="#ee7f00" stroke-width="0.9"/>
<polygon points="1554.60,689.35 1569.60,697.82 1569.60,714.77 1554.60,723.25 1539.60,714.77 1539.60,697.82" fill="#ff8800" stroke="#ee7f00" stroke-width="0.9"/>
<polygon points="1587.60,689.35 1602.60,697.82 1602.60,714.77 1587.60,723.25 1572.60,714.77 1572.60,697.82" fill="#ff8800" stroke="#ee7f00" stroke-width="0.9"/>
<polygon points="1620.60,689.35 1635.60,697.82 1635.60,714.77 1620.60,723.25 1605.60,714.77 1605.60,697.82" fill="#ff8800" stroke="#ee7f00" stroke-width="0.9"/>
<polygon points="1653.60,689.35 1668.60,697.82 1668.60,714.77 1653.60,723.25 1638.60,714.77 1638.60,697.82" fill="#ff8800" stroke="#ee7f00" stroke-width="0.9"/>
<polygon points="1686.60,689.35 1701.60,697.82 1701.60,714.77 1686.60,723.25 1671.60,714.77 1671.60,697.82" fill="#ff8800" stroke="#ee7f00" stroke-width="0.9"/>
<polygon points="1719.60,689.35 1734.60,697.82 1734.60,714.77 1719.60,723.25 1704.60,714.77 1704.60,697.82" fill="#eeee30" stroke="#dcb523" stroke-width="0.9"/>
<polygon points="1752.60,689.35 1767.60,697.82 1767.60,714.77 1752.60,723.25 1737.60,714.77 1737.60,697.82" fill="#eeee30" stroke="#dcb523" stroke-width="0.9"/>
<polygon points="1472.10,717.45 1487.10,725.92 1487.10,742.88 1472.10,751.35 1457.10,742.88 1457.10,725.92" fill="#eeee30" stroke="#dcb523" stroke-width="0.9"/>
<polygon points="1505.10,717.45 1520.10,725.92 1520.10,742.88 1505.10,751.35 1490.10,742.88 1490.10,725.92" fill="#eeee30" stroke="#dcb523" stroke-width="0.9"/>
<polygon points="1538.10,717.45 1553.10,725.92 1553.10,742.88 1538.10,751.35 1523.10,742.88 1523.10,725.92" fill="#eeee30" stroke="#dcb523" stroke-width="0.9"/>
<polygon points="1571.10,717.45 1586.10,725.92 1586.10,742.88 1571.10,751.35 1556.10,742.88 1556.10,725.92" fill="#eeee30" stroke="#dcb523" stroke-width="0.9"/>
<polygon points="1604.10,717.45 1619.10,725.92 1619.10,742.88 1604.10,751.35 1589.10,742.88 1589.10,725.92" fill="#eeee30" stroke="#dcb523" stroke-width="0.9"/>
<polygon points="1637.10,717.45 1652.10,725.92 1652.10,742.88 1637.10,751.35 1622.10,742.88 1622.10,725.92" fill="#eeee30" stroke="#dcb523" stroke-width="0.9"/>
<polygon points="1670.10,717.45 1685.10,725.92 1685.10,742.88 1670.10,751.35 1655.10,742.88 1655.10,725.92" fill="#eeee30" stroke="#dcb523" stroke-width="0.9"/>
<polygon points="1703.10,717.45 1718.10,725.92 1718.10,742.88 1703.10,751.35 1688.10,742.88 1688.10,725.92" fill="#eeee30" stroke="#dcb523" stroke-width="0.9"/>
<polygon points="1736.10,717.45 1751.10,725.92 1751.10,742.88 1736.10,751.35 1721.10,742.88 1721.10,725.92" fill="#eeee30" stroke="#dcb523" stroke-width="0.9"/>
<polygon points="1769.10,717.45 1784.10,725.92 1784.10,742.88 1769.10,751.35 1754.10,742.88 1754.10,725.92" fill="#eeee30" stroke="#dcb523" stroke-width="0.9"/>
<polygon points="1455.60,745.55 1470.60,754.02 1470.60,770.98 1455.60,779.45 1440.60,770.98 1440.60,754.02" fill="#eeee30" stroke="#dcb523" stroke-width="0.9"/>
<polygon points="1488.60,745.55 1503.60,754.02 1503.60,770.98 1488.60,779.45 1473.60,770.98 1473.60,754.02" fill="#eeee30" stroke="#dcb523" stroke-width="0.9"/>
<polygon points="1521.60,745.55 1536.60,754.02 1536.60,770.98 1521.60,779.45 1506.60,770.98 1506.60,754.02" fill="#eeee30" stroke="#dcb523" stroke-width="0.9"/>
<polygon points="1554.60,745.55 1569.60,754.02 1569.60,770.98 1554.60,779.45 1539.60,770.98 1539.60,754.02" fill="#eeee30" stroke="#dcb523" stroke-width="0.9"/>
<polygon points="1587.60,745.55 1602.60,754.02 1602.60,770.98 1587.60,779.45 1572.60,770.98 1572.60,754.02" fill="#eeee30" stroke="#dcb523" stroke-width="0.9"/>
<polygon points="1620.60,745.55 1635.60,754.02 1635.60,770.98 1620.60,779.45 1605.60,770.98 1605.60,754.02" fill="#eeee30" stroke="#dcb523" stroke-width="0.9"/>
<polygon points="1653.60,745.55 1668.60,754.02 1668.60,770.98 1653.60,779.45 1638.60,770.98 1638.60,754.02" fill="#82c060" stroke="#70aa52" stroke-width="0.9"/>
<polygon points="1686.60,745.55 1701.60,754.02 1701.60,770.98 1686.60,779.45 1671.60,770.98 1671.60,754.02" fill="#82c060" stroke="#70aa52" stroke-width="0.9"/>
<polygon points="1719.60,745.55 1734.60,754.02 1734.60,770.98 1719.60,779.45 1704.60,770.98 1704.60,754.02" fill="#82c060" stroke="#70aa52" stroke-width="0.9"/>
<polygon points="1752.60,745.55 1767.60,754.02 1767.60,770.98 1752.60,779.45 1737.60,770.98 1737.60,754.02" fill="#82c060" stroke="#70aa52" stroke-width="0.9"/>
<rect x="1812.4" y="682.3" width="344.1" height="103.1" rx="5" fill="#f6f6f6" stroke="#e2e2e2" stroke-width="1.2"/>
<polygon points="1836.30,688.00 1852.50,697.15 1852.50,715.45 1836.30,724.60 1820.10,715.45 1820.10,697.15" fill="#ffffff"/>
<polygon points="1869.30,688.00 1885.50,697.15 1885.50,715.45 1869.30,724.60 1853.10,715.45 1853.10,697.15" fill="#ffffff"/>
<polygon points="1902.30,688.00 1918.50,697.15 1918.50,715.45 1902.30,724.60 1886.10,715.45 1886.10,697.15" fill="#ffffff"/>
<polygon points="1935.30,688.00 1951.50,697.15 1951.50,715.45 1935.30,724.60 1919.10,715.45 1919.10,697.15" fill="#ffffff"/>
<polygon points="1968.30,688.00 1984.50,697.15 1984.50,715.45 1968.30,724.60 1952.10,715.45 1952.10,697.15" fill="#ffffff"/>
<polygon points="2001.30,688.00 2017.50,697.15 2017.50,715.45 2001.30,724.60 1985.10,715.45 1985.10,697.15" fill="#ffffff"/>
<polygon points="2034.30,688.00 2050.50,697.15 2050.50,715.45 2034.30,724.60 2018.10,715.45 2018.10,697.15" fill="#ffffff"/>
<polygon points="2067.30,688.00 2083.50,697.15 2083.50,715.45 2067.30,724.60 2051.10,715.45 2051.10,697.15" fill="#ffffff"/>
<polygon points="2100.30,688.00 2116.50,697.15 2116.50,715.45 2100.30,724.60 2084.10,715.45 2084.10,697.15" fill="#ffffff"/>
<polygon points="2133.30,688.00 2149.50,697.15 2149.50,715.45 2133.30,724.60 2117.10,715.45 2117.10,697.15" fill="#ffffff"/>
<polygon points="1852.80,716.10 1869.00,725.25 1869.00,743.55 1852.80,752.70 1836.60,743.55 1836.60,725.25" fill="#ffffff"/>
<polygon points="1885.80,716.10 1902.00,725.25 1902.00,743.55 1885.80,752.70 1869.60,743.55 1869.60,725.25" fill="#ffffff"/>
<polygon points="1918.80,716.10 1935.00,725.25 1935.00,743.55 1918.80,752.70 1902.60,743.55 1902.60,725.25" fill="#ffffff"/>
<polygon points="1951.80,716.10 1968.00,725.25 1968.00,743.55 1951.80,752.70 1935.60,743.55 1935.60,725.25" fill="#ffffff"/>
<polygon points="1984.80,716.10 2001.00,725.25 2001.00,743.55 1984.80,752.70 1968.60,743.55 1968.60,725.25" fill="#ffffff"/>
<polygon points="2017.80,716.10 2034.00,725.25 2034.00,743.55 2017.80,752.70 2001.60,743.55 2001.60,725.25" fill="#ffffff"/>
<polygon points="2050.80,716.10 2067.00,725.25 2067.00,743.55 2050.80,752.70 2034.60,743.55 2034.60,725.25" fill="#ffffff"/>
<polygon points="2083.80,716.10 2100.00,725.25 2100.00,743.55 2083.80,752.70 2067.60,743.55 2067.60,725.25" fill="#ffffff"/>
<polygon points="2116.80,716.10 2133.00,725.25 2133.00,743.55 2116.80,752.70 2100.60,743.55 2100.60,725.25" fill="#ffffff"/>
<polygon points="1836.30,744.20 1852.50,753.35 1852.50,771.65 1836.30,780.80 1820.10,771.65 1820.10,753.35" fill="#ffffff"/>
<polygon points="1869.30,744.20 1885.50,753.35 1885.50,771.65 1869.30,780.80 1853.10,771.65 1853.10,753.35" fill="#ffffff"/>
<polygon points="1902.30,744.20 1918.50,753.35 1918.50,771.65 1902.30,780.80 1886.10,771.65 1886.10,753.35" fill="#ffffff"/>
<polygon points="1935.30,744.20 1951.50,753.35 1951.50,771.65 1935.30,780.80 1919.10,771.65 1919.10,753.35" fill="#ffffff"/>
<polygon points="1968.30,744.20 1984.50,753.35 1984.50,771.65 1968.30,780.80 1952.10,771.65 1952.10,753.35" fill="#ffffff"/>
<polygon points="2001.30,744.20 2017.50,753.35 2017.50,771.65 2001.30,780.80 1985.10,771.65 1985.10,753.35" fill="#ffffff"/>
<polygon points="2034.30,744.20 2050.50,753.35 2050.50,771.65 2034.30,780.80 2018.10,771.65 2018.10,753.35" fill="#ffffff"/>
<polygon points="2067.30,744.20 2083.50,753.35 2083.50,771.65 2067.30,780.80 2051.10,771.65 2051.10,753.35" fill="#ffffff"/>
<polygon points="1836.30,689.35 1851.30,697.82 1851.30,714.77 1836.30,723.25 1821.30,714.77 1821.30,697.82" fill="#de3519" stroke="#c8301a" stroke-width="0.9"/>
<polygon points="1869.30,689.35 1884.30,697.82 1884.30,714.77 1869.30,723.25 1854.30,714.77 1854.30,697.82" fill="#de3519" stroke="#c8301a" stroke-width="0.9"/>
<polygon points="1902.30,689.35 1917.30,697.82 1917.30,714.77 1902.30,723.25 1887.30,714.77 1887.30,697.82" fill="#ff8800" stroke="#ee7f00" stroke-width="0.9"/>
<polygon points="1935.30,689.35 1950.30,697.82 1950.30,714.77 1935.30,723.25 1920.30,714.77 1920.30,697.82" fill="#ff8800" stroke="#ee7f00" stroke-width="0.9"/>
<polygon points="1968.30,689.35 1983.30,697.82 1983.30,714.77 1968.30,723.25 1953.30,714.77 1953.30,697.82" fill="#ff8800" stroke="#ee7f00" stroke-width="0.9"/>
<polygon points="2001.30,689.35 2016.30,697.82 2016.30,714.77 2001.30,723.25 1986.30,714.77 1986.30,697.82" fill="#ff8800" stroke="#ee7f00" stroke-width="0.9"/>
<polygon points="2034.30,689.35 2049.30,697.82 2049.30,714.77 2034.30,723.25 2019.30,714.77 2019.30,697.82" fill="#ff8800" stroke="#ee7f00" stroke-width="0.9"/>
<polygon points="2067.30,689.35 2082.30,697.82 2082.30,714.77 2067.30,723.25 2052.30,714.77 2052.30,697.82" fill="#ff8800" stroke="#ee7f00" stroke-width="0.9"/>
<polygon points="2100.30,689.35 2115.30,697.82 2115.30,714.77 2100.30,723.25 2085.30,714.77 2085.30,697.82" fill="#eeee30" stroke="#dcb523" stroke-width="0.9"/>
<polygon points="2133.30,689.35 2148.30,697.82 2148.30,714.77 2133.30,723.25 2118.30,714.77 2118.30,697.82" fill="#eeee30" stroke="#dcb523" stroke-width="0.9"/>
<polygon points="1852.80,717.45 1867.80,725.92 1867.80,742.88 1852.80,751.35 1837.80,742.88 1837.80,725.92" fill="#eeee30" stroke="#dcb523" stroke-width="0.9"/>
<polygon points="1885.80,717.45 1900.80,725.92 1900.80,742.88 1885.80,751.35 1870.80,742.88 1870.80,725.92" fill="#eeee30" stroke="#dcb523" stroke-width="0.9"/>
<polygon points="1918.80,717.45 1933.80,725.92 1933.80,742.88 1918.80,751.35 1903.80,742.88 1903.80,725.92" fill="#eeee30" stroke="#dcb523" stroke-width="0.9"/>
<polygon points="1951.80,717.45 1966.80,725.92 1966.80,742.88 1951.80,751.35 1936.80,742.88 1936.80,725.92" fill="#eeee30" stroke="#dcb523" stroke-width="0.9"/>
<polygon points="1984.80,717.45 1999.80,725.92 1999.80,742.88 1984.80,751.35 1969.80,742.88 1969.80,725.92" fill="#eeee30" stroke="#dcb523" stroke-width="0.9"/>
<polygon points="2017.80,717.45 2032.80,725.92 2032.80,742.88 2017.80,751.35 2002.80,742.88 2002.80,725.92" fill="#eeee30" stroke="#dcb523" stroke-width="0.9"/>
<polygon points="2050.80,717.45 2065.80,725.92 2065.80,742.88 2050.80,751.35 2035.80,742.88 2035.80,725.92" fill="#eeee30" stroke="#dcb523" stroke-width="0.9"/>
<polygon points="2083.80,717.45 2098.80,725.92 2098.80,742.88 2083.80,751.35 2068.80,742.88 2068.80,725.92" fill="#eeee30" stroke="#dcb523" stroke-width="0.9"/>
<polygon points="2116.80,717.45 2131.80,725.92 2131.80,742.88 2116.80,751.35 2101.80,742.88 2101.80,725.92" fill="#eeee30" stroke="#dcb523" stroke-width="0.9"/>
<polygon points="1836.30,745.55 1851.30,754.02 1851.30,770.98 1836.30,779.45 1821.30,770.98 1821.30,754.02" fill="#eeee30" stroke="#dcb523" stroke-width="0.9"/>
<polygon points="1869.30,745.55 1884.30,754.02 1884.30,770.98 1869.30,779.45 1854.30,770.98 1854.30,754.02" fill="#eeee30" stroke="#dcb523" stroke-width="0.9"/>
<polygon points="1902.30,745.55 1917.30,754.02 1917.30,770.98 1902.30,779.45 1887.30,770.98 1887.30,754.02" fill="#eeee30" stroke="#dcb523" stroke-width="0.9"/>
<polygon points="1935.30,745.55 1950.30,754.02 1950.30,770.98 1935.30,779.45 1920.30,770.98 1920.30,754.02" fill="#eeee30" stroke="#dcb523" stroke-width="0.9"/>
<polygon points="1968.30,745.55 1983.30,754.02 1983.30,770.98 1968.30,779.45 1953.30,770.98 1953.30,754.02" fill="#82c060" stroke="#70aa52" stroke-width="0.9"/>
<polygon points="2001.30,745.55 2016.30,754.02 2016.30,770.98 2001.30,779.45 1986.30,770.98 1986.30,754.02" fill="#82c060" stroke="#70aa52" stroke-width="0.9"/>
<polygon points="2034.30,745.55 2049.30,754.02 2049.30,770.98 2034.30,779.45 2019.30,770.98 2019.30,754.02" fill="#82c060" stroke="#70aa52" stroke-width="0.9"/>
<polygon points="2067.30,745.55 2082.30,754.02 2082.30,770.98 2067.30,779.45 2052.30,770.98 2052.30,754.02" fill="#82c060" stroke="#70aa52" stroke-width="0.9"/>
<polygon points="330,1251.5 747,1251.5 1166,1069.7 1166,1267.5 330,1267.5" fill="#dcdcfb"/>
<line x1="330" y1="1001.5" x2="1166" y2="1001.5" stroke="#9aa4c2" stroke-width="1.2"/>
<line x1="330" y1="1065.5" x2="1166" y2="1065.5" stroke="#9aa4c2" stroke-width="1.2"/>
<line x1="330" y1="1129.5" x2="1166" y2="1129.5" stroke="#9aa4c2" stroke-width="1.2"/>
<line x1="330" y1="1193.5" x2="1166" y2="1193.5" stroke="#9aa4c2" stroke-width="1.2"/>
<line x1="330" y1="1257.5" x2="1166" y2="1257.5" stroke="#9aa4c2" stroke-width="1.2"/>
<line x1="330" y1="1287.5" x2="1166" y2="1287.5" stroke="#9aa4c2" stroke-width="1.2"/>
<line x1="408.1" y1="1288.3" x2="408.1" y2="1309.7" stroke="#c5cad8" stroke-width="2"/>
<line x1="519.8" y1="1288.3" x2="519.8" y2="1309.7" stroke="#c5cad8" stroke-width="2"/>
<line x1="636.2" y1="1288.3" x2="636.2" y2="1309.7" stroke="#c5cad8" stroke-width="2"/>
<line x1="744" y1="1288.3" x2="744" y2="1309.7" stroke="#c5cad8" stroke-width="2"/>
<line x1="858" y1="1288.3" x2="858" y2="1309.7" stroke="#c5cad8" stroke-width="2"/>
<line x1="972" y1="1288.3" x2="972" y2="1309.7" stroke="#c5cad8" stroke-width="2"/>
<line x1="1088" y1="1288.3" x2="1088" y2="1309.7" stroke="#c5cad8" stroke-width="2"/>
<line x1="728" y1="1026" x2="728" y2="1286" stroke="#d92b1f" stroke-width="2"/>
<polyline points="330,1251.5 728,1251.5 767.9,1069.6 1166,1069.6" fill="none" stroke="#dc2b1f" stroke-width="4.2" stroke-linejoin="miter"/>
<path d="M728,1000.3 L741,1013.3 L728,1026.3 L715,1013.3 Z" fill="#ffc9a0" stroke="#ff7a14" stroke-width="2.2" stroke-linejoin="round"/>
<line x1="728" y1="1007" x2="728" y2="1015" stroke="#ff7a14" stroke-width="2"/><circle cx="728" cy="1019" r="1.3" fill="#ff7a14"/>
<line x1="1405.5" y1="1011.7" x2="2249" y2="1011.7" stroke="#d4d5da" stroke-width="2"/>
<line x1="1405.5" y1="1109.5" x2="2249" y2="1109.5" stroke="#d4d5da" stroke-width="2"/>
<line x1="1406.8" y1="1208.9" x2="2249" y2="1208.9" stroke="#d4d5da" stroke-width="2"/>
<line x1="1400" y1="1313.0" x2="2249" y2="1313.0" stroke="#d4d5da" stroke-width="2"/>
<path d="M1407.70,1197.30 C1409.63,1197.25 1415.22,1197.37 1419.30,1197.00 C1423.38,1196.63 1427.90,1196.07 1432.20,1195.10 C1436.50,1194.13 1439.95,1192.50 1445.10,1191.20 C1450.25,1189.90 1458.60,1187.77 1463.10,1187.30 C1467.60,1186.83 1468.03,1187.32 1472.10,1188.40 C1476.17,1189.48 1482.78,1192.68 1487.50,1193.80 C1492.22,1194.92 1496.32,1194.50 1500.40,1195.10 C1504.48,1195.70 1506.95,1198.70 1512.00,1197.40 C1517.05,1196.10 1525.98,1187.68 1530.70,1187.30 C1535.42,1186.92 1536.33,1193.85 1540.30,1195.10 C1544.27,1196.35 1549.98,1195.13 1554.50,1194.80 C1559.02,1194.47 1563.10,1191.77 1567.40,1193.10 C1571.70,1194.43 1576.87,1200.12 1580.30,1202.80 C1583.73,1205.48 1583.93,1206.30 1588.00,1209.20 C1592.07,1212.10 1598.48,1221.05 1604.70,1220.20 C1610.92,1219.35 1618.65,1208.93 1625.30,1204.10 C1631.95,1199.27 1638.82,1193.88 1644.60,1191.20 C1650.38,1188.52 1656.35,1189.28 1660.00,1188.00 C1663.65,1186.72 1663.27,1188.22 1666.50,1183.50 C1669.73,1178.78 1675.75,1161.42 1679.40,1159.70 C1683.05,1157.98 1684.97,1169.02 1688.40,1173.20 C1691.83,1177.38 1696.73,1182.60 1700.00,1184.80 C1703.27,1187.00 1703.45,1187.97 1708.00,1186.40 C1712.55,1184.83 1721.72,1175.52 1727.30,1175.40 C1732.88,1175.28 1738.28,1183.87 1741.50,1185.70 C1744.72,1187.53 1743.82,1185.75 1746.60,1186.40 C1749.38,1187.05 1755.18,1189.22 1758.20,1189.60 C1761.22,1189.98 1762.77,1188.17 1764.70,1188.70 C1766.63,1189.23 1768.08,1189.75 1769.80,1192.80 C1771.52,1195.85 1772.85,1203.13 1775.00,1207.00 C1777.15,1210.87 1779.70,1213.33 1782.70,1216.00 C1785.70,1218.67 1789.13,1222.80 1793.00,1223.00 C1796.87,1223.20 1801.60,1219.55 1805.90,1217.20 C1810.20,1214.85 1815.15,1211.15 1818.80,1208.90 C1822.45,1206.65 1823.52,1204.67 1827.80,1203.70 C1832.08,1202.73 1839.57,1203.63 1844.50,1203.10 C1849.43,1202.57 1850.97,1202.00 1857.40,1200.50 C1863.83,1199.00 1877.53,1195.07 1883.10,1194.10 C1888.67,1193.13 1886.50,1193.52 1890.80,1194.70 C1895.10,1195.88 1903.75,1199.92 1908.90,1201.20 C1914.05,1202.48 1917.85,1201.98 1921.70,1202.40 C1925.55,1202.82 1927.17,1205.08 1932.00,1203.70 C1936.83,1202.32 1945.97,1194.52 1950.70,1194.10 C1955.43,1193.68 1955.57,1200.02 1960.40,1201.20 C1965.23,1202.38 1975.23,1201.48 1979.70,1201.20 C1984.17,1200.92 1985.15,1199.58 1987.20,1199.50 C1989.25,1199.42 1989.20,1198.70 1992.00,1200.70 C1994.80,1202.70 2000.80,1208.70 2004.00,1211.50 C2007.20,1214.30 2007.78,1215.10 2011.20,1217.50 C2014.62,1219.90 2019.68,1226.20 2024.50,1225.90 C2029.32,1225.60 2035.50,1219.10 2040.10,1215.70 C2044.70,1212.30 2047.70,1208.60 2052.10,1205.50 C2056.50,1202.40 2062.10,1198.90 2066.50,1197.10 C2070.90,1195.30 2075.28,1195.80 2078.50,1194.70 C2081.72,1193.60 2083.38,1193.60 2085.80,1190.50 C2088.22,1187.40 2090.70,1180.22 2093.00,1176.10 C2095.30,1171.98 2097.20,1165.60 2099.60,1165.80 C2102.00,1166.00 2105.30,1174.18 2107.40,1177.30 C2109.50,1180.42 2108.80,1181.90 2112.20,1184.50 C2115.60,1187.10 2123.80,1192.10 2127.80,1192.90 C2131.80,1193.70 2133.00,1191.15 2136.20,1189.30 C2139.40,1187.45 2142.98,1181.40 2147.00,1181.80 C2151.02,1182.20 2157.28,1190.05 2160.30,1191.70 C2163.32,1193.35 2162.10,1191.00 2165.10,1191.70 C2168.10,1192.40 2175.50,1195.30 2178.30,1195.90 C2181.10,1196.50 2180.10,1194.20 2181.90,1195.30 C2183.70,1196.40 2187.10,1199.70 2189.10,1202.50 C2191.10,1205.30 2190.30,1207.80 2193.90,1212.10 C2197.50,1216.40 2205.28,1226.70 2210.70,1228.30 C2216.12,1229.90 2220.18,1224.70 2226.40,1221.70 C2232.62,1218.70 2244.40,1212.20 2248.00,1210.30" fill="none" stroke="#0a64ff" stroke-width="4" stroke-linejoin="round" stroke-linecap="round"/>
</svg>
<div class="t" style="left:316.00px;top:54.00px;font-size:65.12px;line-height:65.12px;color:#1a1a1a;font-weight:bold;transform:scaleX(0.8723);">Logic</div>
<div class="t" style="left:465.13px;top:54.00px;font-size:65.12px;line-height:65.12px;color:#1a1a1a;font-weight:bold;transform:scaleX(0.8880);">Monitor</div>
<div class="t" style="left:755.34px;top:66.00px;font-size:41.86px;line-height:41.86px;color:#0a0a0a;transform:scaleX(1.0069);">Dashboards</div>
<div class="t" style="left:1093.83px;top:66.00px;font-size:41.57px;line-height:41.57px;color:#1a3595;transform:scaleX(1.0275);">Customize</div>
<div class="t" style="left:213.12px;top:180.00px;font-size:42.01px;line-height:42.01px;color:#1b1b1f;transform:scaleX(0.9946);">Views</div>
<div class="t" style="left:518.30px;top:180.00px;font-size:42.01px;line-height:42.01px;color:#1b1b1f;transform:scaleX(1.0460);">Filter</div>
<div class="t" style="left:624.08px;top:180.00px;font-size:42.01px;line-height:42.01px;color:#1b1b1f;transform:scaleX(1.0769);">by:</div>
<div class="t" style="left:2049.68px;top:179.00px;font-size:42.15px;line-height:42.15px;color:#98a2b3;transform:scaleX(0.9920);">Clear</div>
<div class="t" style="left:244.22px;top:312.00px;font-size:32.70px;line-height:32.70px;color:#111a2e;transform:scaleX(1.0635);">Traffic</div>
<div class="t" style="left:347.95px;top:312.00px;font-size:32.70px;line-height:32.70px;color:#111a2e;transform:scaleX(0.9010);">%</div>
<div class="t" style="left:416.39px;top:529.00px;font-size:129.36px;line-height:129.36px;color:#000000;transform:scaleX(1.0815);">4</div>
<div class="t" style="left:496.65px;top:529.00px;font-size:129.36px;line-height:129.36px;color:#000000;transform:scaleX(1.0337);">5</div>
<div class="t" style="left:573.58px;top:529.00px;font-size:129.36px;line-height:129.36px;color:#000000;transform:scaleX(0.8941);">%</div>
<div class="t" style="left:317.78px;top:755.00px;font-size:23.59px;line-height:23.59px;color:#0f0f0f;transform:scaleX(1.3215);">0</div>
<div class="t" style="left:485.10px;top:759.00px;font-size:25.87px;line-height:25.87px;color:#0f0f0f;transform:scaleX(1.0375);">Total</div>
<div class="t" style="left:547.19px;top:759.00px;font-size:25.87px;line-height:25.87px;color:#0f0f0f;transform:scaleX(1.0480);">Traffic</div>
<div class="t" style="left:754.50px;top:759.00px;font-size:25.14px;line-height:25.14px;color:#0f0f0f;transform:scaleX(1.0448);">100</div>
<div class="t" style="left:938.99px;top:311.00px;font-size:32.85px;line-height:32.85px;color:#1b1b1b;transform:scaleX(1.0340);">Global</div>
<div class="t" style="left:1044.59px;top:311.00px;font-size:32.85px;line-height:32.85px;color:#1b1b1b;transform:scaleX(1.0325);">Organization</div>
<div class="t" style="left:1243.16px;top:311.00px;font-size:32.85px;line-height:32.85px;color:#1b1b1b;transform:scaleX(1.0532);">Network</div>
<div class="t" style="left:1377.88px;top:311.00px;font-size:32.85px;line-height:32.85px;color:#1b1b1b;transform:scaleX(1.0078);">Resource</div>
<div class="t" style="left:1526.56px;top:311.00px;font-size:32.85px;line-height:32.85px;color:#1b1b1b;transform:scaleX(1.0530);">Health</div>
<div class="t" style="left:940.53px;top:376.00px;font-size:36.34px;line-height:36.34px;color:#2a3245;">Austin,</div>
<div class="t" style="left:1058.88px;top:376.00px;font-size:36.34px;line-height:36.34px;color:#2a3245;transform:scaleX(0.8806);">TX</div>
<div class="t" style="left:1107.45px;top:391.00px;font-size:16.24px;line-height:16.24px;color:#a4aab6;transform:scaleX(1.2765);">60</div>
<div class="t" style="left:1431.16px;top:376.00px;font-size:36.34px;line-height:36.34px;color:#2a3245;transform:scaleX(0.9540);">Dallas,</div>
<div class="t" style="left:1544.49px;top:376.00px;font-size:36.34px;line-height:36.34px;color:#2a3245;transform:scaleX(0.8695);">TX</div>
<div class="t" style="left:1594.48px;top:391.00px;font-size:16.24px;line-height:16.24px;color:#a4aab6;transform:scaleX(1.1071);">58</div>
<div class="t" style="left:1812.16px;top:376.00px;font-size:36.34px;line-height:36.34px;color:#2a3245;transform:scaleX(0.9963);">Chicago,</div>
<div class="t" style="left:1961.53px;top:376.00px;font-size:36.34px;line-height:36.34px;color:#2a3245;transform:scaleX(0.9167);">IL</div>
<div class="t" style="left:1997.09px;top:391.00px;font-size:16.47px;line-height:16.47px;color:#a4aab6;transform:scaleX(1.0752);">42</div>
<div class="t" style="left:937.75px;top:638.00px;font-size:36.34px;line-height:36.34px;color:#2a3245;transform:scaleX(1.0231);">London,</div>
<div class="t" style="left:1077.97px;top:638.00px;font-size:36.34px;line-height:36.34px;color:#2a3245;transform:scaleX(1.0451);">United</div>
<div class="t" style="left:1195.97px;top:638.00px;font-size:36.34px;line-height:36.34px;color:#2a3245;transform:scaleX(1.0149);">Kingdom</div>
<div class="t" style="left:1347.48px;top:654.00px;font-size:16.38px;line-height:16.38px;color:#a4aab6;transform:scaleX(1.2297);">60</div>
<div class="t" style="left:1431.16px;top:638.00px;font-size:36.34px;line-height:36.34px;color:#2a3245;transform:scaleX(1.0135);">Orlando,</div>
<div class="t" style="left:1579.35px;top:638.00px;font-size:36.34px;line-height:36.34px;color:#2a3245;transform:scaleX(0.8896);">FL</div>
<div class="t" style="left:1624.16px;top:654.00px;font-size:16.38px;line-height:16.38px;color:#a4aab6;transform:scaleX(1.1851);">30</div>
<div class="t" style="left:1812.23px;top:638.00px;font-size:36.34px;line-height:36.34px;color:#2a3245;transform:scaleX(1.0092);">Seattle,</div>
<div class="t" style="left:1945.05px;top:638.00px;font-size:36.34px;line-height:36.34px;color:#2a3245;transform:scaleX(0.9208);">Wa</div>
<div class="t" style="left:2003.34px;top:654.00px;font-size:16.38px;line-height:16.38px;color:#a4aab6;transform:scaleX(1.0427);">28</div>
<div class="t" style="left:242.35px;top:898.00px;font-size:33.58px;line-height:33.58px;color:#1b1b1b;transform:scaleX(1.0345);">Project</div>
<div class="t" style="left:360.46px;top:898.00px;font-size:33.58px;line-height:33.58px;color:#1b1b1b;transform:scaleX(0.9826);">Tracker</div>
<div class="t" style="left:1294.83px;top:899.00px;font-size:32.56px;line-height:32.56px;color:#1b1b1b;transform:scaleX(1.0891);">Application</div>
<div class="t" style="left:1475.46px;top:899.00px;font-size:32.56px;line-height:32.56px;color:#1b1b1b;transform:scaleX(1.0620);">Latency</div>
<div class="t" style="left:1604.79px;top:899.00px;font-size:32.56px;line-height:32.56px;color:#1b1b1b;transform:scaleX(1.0155);">Response</div>
<div class="t" style="left:1761.23px;top:899.00px;font-size:32.56px;line-height:32.56px;color:#1b1b1b;transform:scaleX(1.0556);">Time</div>
<div class="t" style="left:1842.42px;top:899.00px;font-size:32.56px;line-height:32.56px;color:#1b1b1b;transform:scaleX(1.0799);">(Trend)</div>
<div class="t" style="left:275.92px;top:994.00px;font-size:15.96px;line-height:15.96px;color:#111111;transform:scaleX(1.2260);">500</div>
<div class="t" style="left:276.26px;top:1059.00px;font-size:15.96px;line-height:15.96px;color:#111111;transform:scaleX(1.2130);">400</div>
<div class="t" style="left:275.96px;top:1123.00px;font-size:15.96px;line-height:15.96px;color:#111111;transform:scaleX(1.2245);">300</div>
<div class="t" style="left:275.71px;top:1187.00px;font-size:15.96px;line-height:15.96px;color:#111111;transform:scaleX(1.2340);">200</div>
<div class="t" style="left:275.41px;top:1251.00px;font-size:15.96px;line-height:15.96px;color:#111111;transform:scaleX(1.0650);">100</div>
<div class="t" style="left:328.99px;top:1294.00px;font-size:16.24px;line-height:16.24px;color:#111111;transform:scaleX(0.9800);">13:30</div>
<div class="t" style="left:443.22px;top:1294.00px;font-size:16.24px;line-height:16.24px;color:#111111;transform:scaleX(0.9502);">13:45</div>
<div class="t" style="left:554.92px;top:1294.00px;font-size:16.24px;line-height:16.24px;color:#111111;transform:scaleX(1.0342);">14:00</div>
<div class="t" style="left:671.06px;top:1294.00px;font-size:16.48px;line-height:16.48px;color:#111111;transform:scaleX(0.8321);">14:15</div>
<div class="t" style="left:779.17px;top:1294.00px;font-size:16.24px;line-height:16.24px;color:#111111;transform:scaleX(0.9903);">14:30</div>
<div class="t" style="left:893.11px;top:1294.00px;font-size:16.48px;line-height:16.48px;color:#111111;transform:scaleX(0.9517);">14:45</div>
<div class="t" style="left:1007.13px;top:1294.00px;font-size:16.24px;line-height:16.24px;color:#111111;transform:scaleX(1.0264);">15:00</div>
<div class="t" style="left:1123.36px;top:1294.00px;font-size:16.48px;line-height:16.48px;color:#111111;transform:scaleX(0.8296);">15:15</div>
<div class="t" style="left:1324.47px;top:1001.00px;font-size:19.07px;line-height:19.07px;color:#222a3a;transform:scaleX(1.0542);">1000</div>
<div class="t" style="left:1333.03px;top:1101.00px;font-size:19.07px;line-height:19.07px;color:#222a3a;transform:scaleX(1.1384);">500</div>
<div class="t" style="left:1334.56px;top:1201.00px;font-size:19.07px;line-height:19.07px;color:#222a3a;transform:scaleX(1.0894);">250</div>
<div class="t" style="left:1355.96px;top:1302.00px;font-size:18.22px;line-height:18.22px;color:#222a3a;transform:scaleX(1.3204);">0</div>
<div class="t" style="left:1382.39px;top:1325.00px;font-size:16.67px;line-height:16.67px;color:#111a2e;font-weight:bold;transform:scaleX(1.0564);">16:00</div>
<div class="t" style="left:1636.37px;top:1325.00px;font-size:16.67px;line-height:16.67px;color:#111a2e;font-weight:bold;transform:scaleX(1.0855);">20:00</div>
<div class="t" style="left:2143.37px;top:1325.00px;font-size:16.67px;line-height:16.67px;color:#111a2e;font-weight:bold;transform:scaleX(1.1070);">04:00</div>
<div class="t" style="left:1892.02px;top:1325.00px;font-size:16.72px;line-height:16.72px;color:#111a2e;font-weight:bold;transform:scaleX(0.9979);">3 Apr</div>
<div class="t" style="left:1296.6px;top:1160.5px;font-size:16.5px;line-height:16.5px;font-weight:bold;color:#111a2e;transform:rotate(-90deg) translate(-20px,0);transform-origin:0 0">ms</div>
</div>
</body></html>
